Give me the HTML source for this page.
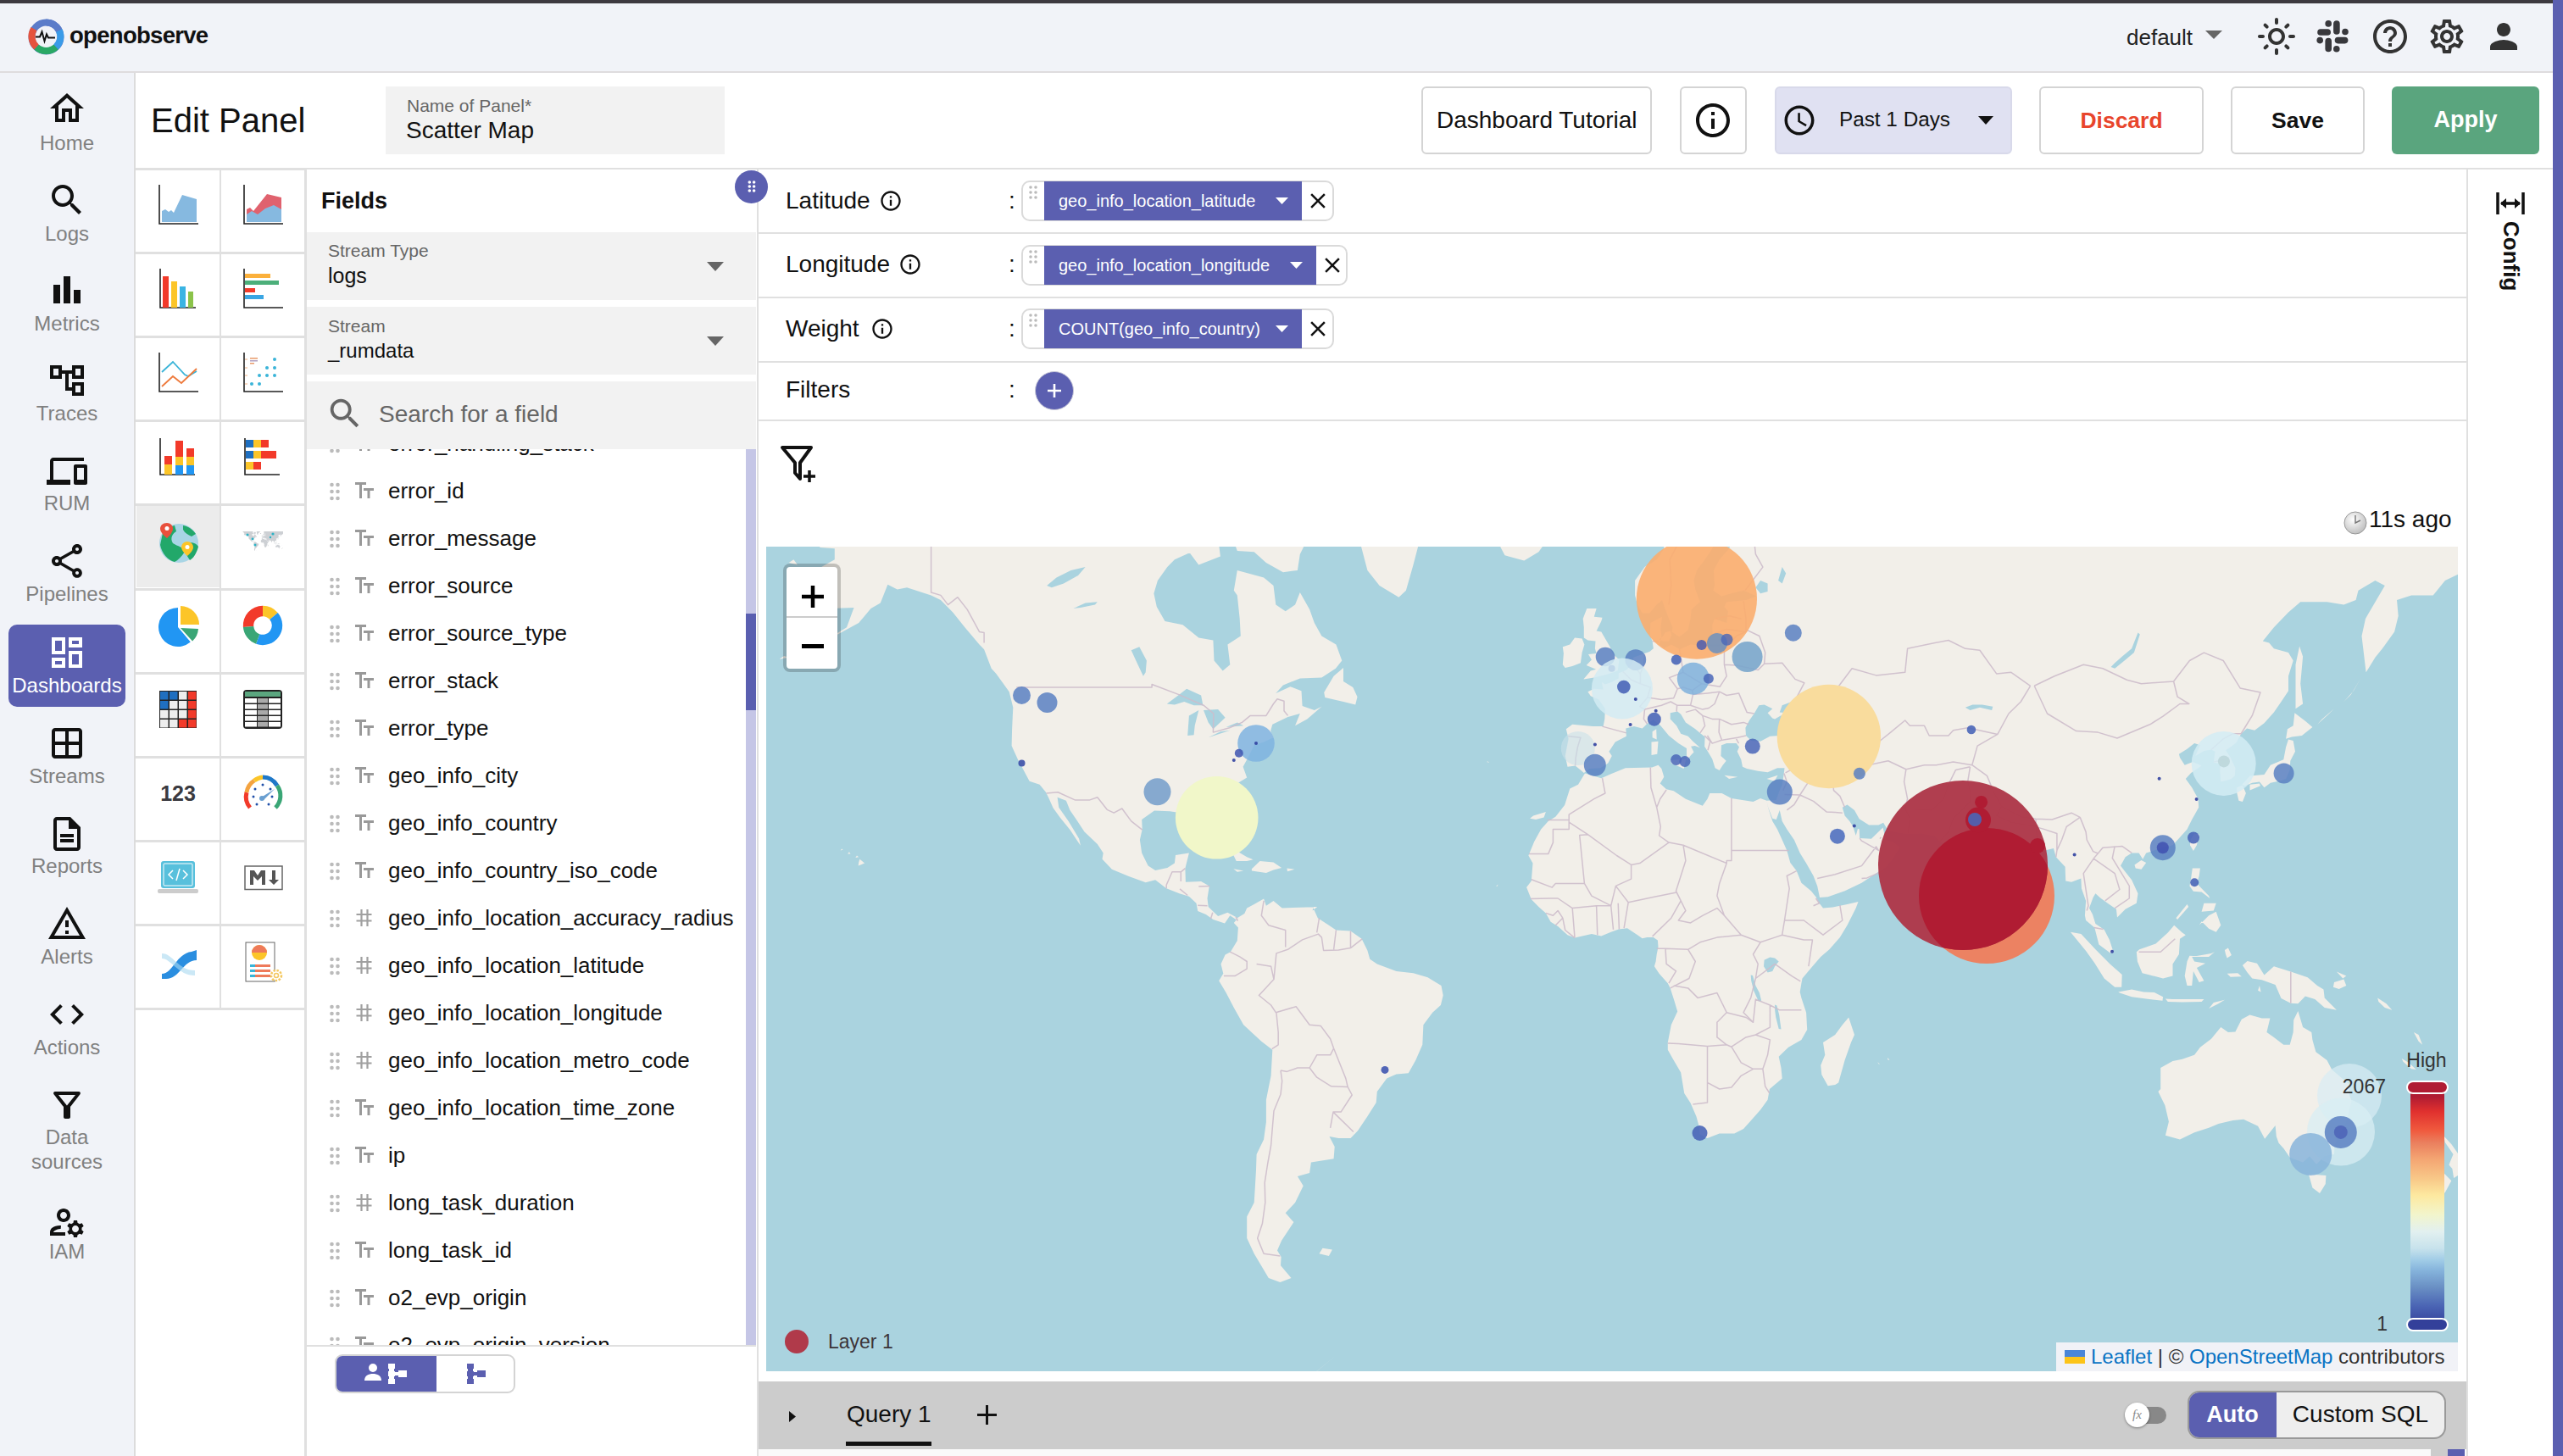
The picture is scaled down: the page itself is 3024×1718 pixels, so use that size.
<!DOCTYPE html>
<html><head><meta charset="utf-8"><style>
html,body{margin:0;padding:0;}
body{width:3024px;height:1718px;overflow:hidden;position:relative;background:#fff;font-family:"Liberation Sans", sans-serif;}
</style></head><body>
<div style="position:absolute;left:0px;top:0px;width:3024px;height:4px;background:#3d3a40"></div><div style="position:absolute;left:0px;top:4px;width:3024px;height:80px;background:#f1f3f8"></div><div style="position:absolute;left:0px;top:84px;width:3024px;height:2px;background:#dedcde"></div><div style="position:absolute;left:0px;top:86px;width:158px;height:1632px;background:#f1f3f8"></div><div style="position:absolute;left:158px;top:86px;width:2px;height:1632px;background:#dcdcdc"></div><div style="position:absolute;left:3012px;top:0px;width:12px;height:1718px;background:#5b5fb0"></div><svg style="position:absolute;left:33px;top:22px;overflow:visible" width="43" height="43" viewBox="0 0 43 43">
<circle cx="21.5" cy="21.5" r="17" fill="none" stroke="#5b7cc9" stroke-width="8" />
<path d="M21.5 4.5 A17 17 0 0 1 36.5 13.5" fill="none" stroke="#5b7cc9" stroke-width="8"/>
<path d="M36.8 14 A17 17 0 0 1 33 33.5" fill="none" stroke="#3a9be8" stroke-width="8"/>
<path d="M33 33.5 A17 17 0 0 1 10 33.5" fill="none" stroke="#2aa865" stroke-width="8"/>
<path d="M10 33.5 A17 17 0 0 1 7 12" fill="none" stroke="#e5533d" stroke-width="8"/>
<path d="M9 21.5 h5 l2.5 -6 l3 11 l2.5 -8 l2 4 h8" fill="none" stroke="#111" stroke-width="2"/>
</svg><div style="position:absolute;left:82px;top:27.7px;font-size:27.5px;line-height:27.5px;color:#111;font-weight:bold;white-space:nowrap;letter-spacing:-0.7px">openobserve</div><div style="position:absolute;left:2509px;top:30.8px;font-size:26px;line-height:26px;color:#222;font-weight:normal;white-space:nowrap;">default</div><svg style="position:absolute;left:2602px;top:36px;overflow:visible" width="20" height="10" viewBox="0 0 20 10"><path d="M0 0 H20 L10 10 Z" fill="#666"/></svg><svg style="position:absolute;left:2662px;top:19px;" width="48" height="48" viewBox="0 0 24 24"><path fill="#333" d="M12 9c1.65 0 3 1.35 3 3s-1.35 3-3 3-3-1.35-3-3 1.35-3 3-3m0-2c-2.76 0-5 2.24-5 5s2.24 5 5 5 5-2.24 5-5-2.24-5-5-5zM2 13h2c.55 0 1-.45 1-1s-.45-1-1-1H2c-.55 0-1 .45-1 1s.45 1 1 1zm18 0h2c.55 0 1-.45 1-1s-.45-1-1-1h-2c-.55 0-1 .45-1 1s.45 1 1 1zM11 2v2c0 .55.45 1 1 1s1-.45 1-1V2c0-.55-.45-1-1-1s-1 .45-1 1zm0 18v2c0 .55.45 1 1 1s1-.45 1-1v-2c0-.55-.45-1-1-1s-1 .45-1 1zM5.99 4.58c-.39-.39-1.03-.39-1.41 0-.39.39-.39 1.03 0 1.41l1.06 1.06c.39.39 1.03.39 1.41 0s.39-1.03 0-1.41L5.99 4.58zm12.37 12.37c-.39-.39-1.03-.39-1.41 0-.39.39-.39 1.03 0 1.41l1.06 1.06c.39.39 1.03.39 1.41 0 .39-.39.39-1.03 0-1.41l-1.06-1.06zm1.06-10.96c.39-.39.39-1.03 0-1.41-.39-.39-1.03-.39-1.41 0l-1.06 1.06c-.39.39-.39 1.03 0 1.41s1.03.39 1.41 0l1.06-1.06zM7.05 18.36c.39-.39.39-1.03 0-1.41-.39-.39-1.03-.39-1.41 0l-1.06 1.06c-.39.39-.39 1.03 0 1.41s1.03.39 1.41 0l1.06-1.06z"/></svg><svg style="position:absolute;left:2730px;top:20px;overflow:visible" width="45" height="45" viewBox="0 0 45 45"><g fill="#38383c">
<circle cx="17.2" cy="7.9" r="3.8"/><rect x="23.1" y="4.3" width="7.6" height="16.4" rx="3.8"/>
<rect x="4.2" y="14.2" width="15.8" height="7.6" rx="3.8"/><circle cx="37" cy="17.5" r="3.8"/>
<rect x="24.7" y="23.8" width="15.7" height="7.6" rx="3.8"/><rect x="13.4" y="24.8" width="7.6" height="16.4" rx="3.8"/>
<circle cx="26.8" cy="37.8" r="3.8"/><circle cx="7.2" cy="27.6" r="3.8"/>
</g></svg><svg style="position:absolute;left:2796px;top:19px;" width="48" height="48" viewBox="0 0 24 24"><path fill="#333" d="M11 18h2v-2h-2v2zm1-16C6.48 2 2 6.48 2 12s4.48 10 10 10 10-4.48 10-10S17.52 2 12 2zm0 18c-4.41 0-8-3.59-8-8s3.59-8 8-8 8 3.59 8 8-3.59 8-8 8zm0-14c-2.21 0-4 1.79-4 4h2c0-1.1.9-2 2-2s2 .9 2 2c0 2-3 1.75-3 5h2c0-2.25 3-2.5 3-5 0-2.21-1.79-4-4-4z"/></svg><svg style="position:absolute;left:2863px;top:19px;" width="48" height="48" viewBox="0 0 24 24"><path fill="#333" d="M19.43 12.98c.04-.32.07-.64.07-.98 0-.34-.03-.66-.07-.98l2.11-1.65c.19-.15.24-.42.12-.64l-2-3.46c-.09-.16-.26-.25-.44-.25-.06 0-.12.01-.17.03l-2.49 1c-.52-.4-1.08-.73-1.69-.98l-.38-2.65C14.46 2.18 14.25 2 14 2h-4c-.25 0-.46.18-.49.42l-.38 2.65c-.61.25-1.17.59-1.69.98l-2.49-1c-.06-.02-.12-.03-.18-.03-.17 0-.34.09-.43.25l-2 3.46c-.13.22-.07.49.12.64l2.11 1.65c-.04.32-.07.65-.07.98 0 .33.03.66.07.98l-2.11 1.65c-.19.15-.24.42-.12.64l2 3.46c.09.16.26.25.44.25.06 0 .12-.01.17-.03l2.49-1c.52.4 1.08.73 1.69.98l.38 2.65c.03.24.24.42.49.42h4c.25 0 .46-.18.49-.42l.38-2.65c.61-.25 1.17-.59 1.69-.98l2.49 1c.06.02.12.03.18.03.17 0 .34-.09.43-.25l2-3.46c.12-.22.07-.49-.12-.64l-2.11-1.65zm-1.98-1.71c.04.31.05.52.05.73 0 .21-.02.43-.05.73l-.14 1.13.89.7 1.08.84-.7 1.21-1.27-.51-1.04-.42-.9.68c-.43.32-.84.56-1.25.73l-1.06.43-.16 1.13-.2 1.35h-1.4l-.19-1.35-.16-1.13-1.06-.43c-.43-.18-.83-.41-1.23-.71l-.91-.7-1.06.43-1.27.51-.7-1.21 1.08-.84.89-.7-.14-1.13c-.03-.31-.05-.54-.05-.74s.02-.43.05-.73l.14-1.13-.89-.7-1.08-.84.7-1.21 1.27.51 1.04.42.9-.68c.43-.32.84-.56 1.25-.73l1.06-.43.16-1.13.2-1.35h1.39l.19 1.35.16 1.13 1.06.43c.43.18.83.41 1.23.71l.91.7 1.06-.43 1.27-.51.7 1.21-1.07.85-.89.7.14 1.13zM12 8c-2.21 0-4 1.79-4 4s1.79 4 4 4 4-1.79 4-4-1.79-4-4-4zm0 6c-1.1 0-2-.9-2-2s.9-2 2-2 2 .9 2 2-.9 2-2 2z"/></svg><svg style="position:absolute;left:2930px;top:19px;" width="48" height="48" viewBox="0 0 24 24"><path fill="#333" d="M12 12c2.21 0 4-1.79 4-4s-1.79-4-4-4-4 1.79-4 4 1.79 4 4 4zm0 2c-2.67 0-8 1.34-8 4v2h16v-2c0-2.66-5.33-4-8-4z"/></svg><div style="position:absolute;left:10px;top:737px;width:138px;height:97px;background:#5b5fb0;border-radius:10px"></div><svg style="position:absolute;left:55px;top:104px;" width="48" height="48" viewBox="0 0 24 24"><path fill="#111" d="M12 5.69l5 4.5V18h-2v-6H9v6H7v-7.81l5-4.5M12 3L2 12h3v8h6v-6h2v6h6v-8h3L12 3z"/></svg><div style="position:absolute;left:-421px;width:1000px;text-align:center;top:157.2px;font-size:24px;line-height:24px;color:#808080;font-weight:normal;white-space:nowrap;">Home</div><svg style="position:absolute;left:55px;top:212px;" width="48" height="48" viewBox="0 0 24 24"><path fill="#111" d="M15.5 14h-.79l-.28-.27C15.41 12.59 16 11.11 16 9.5 16 5.91 13.09 3 9.5 3S3 5.91 3 9.5 5.91 16 9.5 16c1.61 0 3.09-.59 4.23-1.57l.27.28v.79l5 4.99L20.49 19l-4.99-5zm-6 0C7.01 14 5 11.99 5 9.5S7.01 5 9.5 5 14 7.01 14 9.5 11.99 14 9.5 14z"/></svg><div style="position:absolute;left:-421px;width:1000px;text-align:center;top:264.2px;font-size:24px;line-height:24px;color:#808080;font-weight:normal;white-space:nowrap;">Logs</div><svg style="position:absolute;left:55px;top:318px;" width="48" height="48" viewBox="0 0 24 24"><path fill="#111" d="M4 9h4v11H4zm6-5h4v16h-4zm6 8h4v8h-4z"/></svg><div style="position:absolute;left:-421px;width:1000px;text-align:center;top:370.2px;font-size:24px;line-height:24px;color:#808080;font-weight:normal;white-space:nowrap;">Metrics</div><svg style="position:absolute;left:55px;top:425px;" width="48" height="48" viewBox="0 0 24 24"><path fill="#111" d="M22 11V3h-7v3H9V3H2v8h7V8h2v10h4v3h7v-8h-7v3h-2V8h2v3h7zM7 9H4V5h3v4zm10 6h3v4h-3v-4zm0-10h3v4h-3V5z"/></svg><div style="position:absolute;left:-421px;width:1000px;text-align:center;top:476.2px;font-size:24px;line-height:24px;color:#808080;font-weight:normal;white-space:nowrap;">Traces</div><svg style="position:absolute;left:55px;top:532px;" width="48" height="48" viewBox="0 0 24 24"><path fill="#111" d="M4 6h18V4H4c-1.1 0-2 .9-2 2v11H0v3h14v-3H4V6zm19 2h-6c-.55 0-1 .45-1 1v10c0 .55.45 1 1 1h6c.55 0 1-.45 1-1V9c0-.55-.45-1-1-1zm-1 9h-4v-7h4v7z"/></svg><div style="position:absolute;left:-421px;width:1000px;text-align:center;top:582.2px;font-size:24px;line-height:24px;color:#808080;font-weight:normal;white-space:nowrap;">RUM</div><svg style="position:absolute;left:55px;top:638px;" width="48" height="48" viewBox="0 0 24 24"><path fill="#111" d="M18 16.08c-.76 0-1.44.3-1.96.77L8.91 12.7c.05-.23.09-.46.09-.7s-.04-.47-.09-.7l7.05-4.11c.54.5 1.25.81 2.04.81 1.66 0 3-1.34 3-3s-1.34-3-3-3-3 1.34-3 3c0 .24.04.47.09.7L8.04 9.81C7.5 9.31 6.79 9 6 9c-1.66 0-3 1.34-3 3s1.34 3 3 3c.79 0 1.5-.31 2.04-.81l7.12 4.16c-.05.21-.08.43-.08.65 0 1.61 1.31 2.92 2.92 2.92s2.92-1.31 2.92-2.92c0-1.61-1.31-2.92-2.92-2.92zM18 4c.55 0 1 .45 1 1s-.45 1-1 1-1-.45-1-1 .45-1 1-1zM6 13c-.55 0-1-.45-1-1s.45-1 1-1 1 .45 1 1-.45 1-1 1zm12 7.02c-.55 0-1-.45-1-1s.45-1 1-1 1 .45 1 1-.45 1-1 1z"/></svg><div style="position:absolute;left:-421px;width:1000px;text-align:center;top:689.2px;font-size:24px;line-height:24px;color:#808080;font-weight:normal;white-space:nowrap;">Pipelines</div><svg style="position:absolute;left:55px;top:746px;" width="48" height="48" viewBox="0 0 24 24"><path fill="#fff" d="M19 5v2h-4V5h4M9 5v6H5V5h4m10 8v6h-4v-6h4M9 17v2H5v-2h4M21 3h-8v6h8V3zM11 3H3v10h8V3zm10 8h-8v10h8V11zm-10 4H3v6h8v-6z"/></svg><div style="position:absolute;left:-421px;width:1000px;text-align:center;top:797.2px;font-size:24px;line-height:24px;color:#fff;font-weight:normal;white-space:nowrap;">Dashboards</div><svg style="position:absolute;left:55px;top:853px;" width="48" height="48" viewBox="0 0 24 24"><path fill="#111" d="M19 3H5c-1.1 0-2 .9-2 2v14c0 1.1.9 2 2 2h14c1.1 0 2-.9 2-2V5c0-1.1-.9-2-2-2zm0 2v6h-6V5h6zm-8 0v6H5V5h6zm-6 14v-6h6v6H5zm8 0v-6h6v6h-6z"/></svg><div style="position:absolute;left:-421px;width:1000px;text-align:center;top:904.2px;font-size:24px;line-height:24px;color:#808080;font-weight:normal;white-space:nowrap;">Streams</div><svg style="position:absolute;left:55px;top:960px;" width="48" height="48" viewBox="0 0 24 24"><path fill="#111" d="M14 2H6c-1.1 0-1.99.9-1.99 2L4 20c0 1.1.89 2 1.99 2H18c1.1 0 2-.9 2-2V8l-6-6zm4 18H6V4h7v5h5v11zM8 15h8v2H8zm0-3h8v2H8z"/></svg><div style="position:absolute;left:-421px;width:1000px;text-align:center;top:1010.2px;font-size:24px;line-height:24px;color:#808080;font-weight:normal;white-space:nowrap;">Reports</div><svg style="position:absolute;left:55px;top:1066px;" width="48" height="48" viewBox="0 0 24 24"><path fill="#111" d="M12 5.99L19.53 19H4.47L12 5.99M12 2L1 21h22L12 2zm1 14h-2v2h2v-2zm0-6h-2v4h2v-4z"/></svg><div style="position:absolute;left:-421px;width:1000px;text-align:center;top:1117.2px;font-size:24px;line-height:24px;color:#808080;font-weight:normal;white-space:nowrap;">Alerts</div><svg style="position:absolute;left:55px;top:1173px;" width="48" height="48" viewBox="0 0 24 24"><path fill="#111" d="M9.4 16.6L4.8 12l4.6-4.6L8 6l-6 6 6 6 1.4-1.4zm5.2 0l4.6-4.6-4.6-4.6L16 6l6 6-6 6-1.4-1.4z"/></svg><div style="position:absolute;left:-421px;width:1000px;text-align:center;top:1224.2px;font-size:24px;line-height:24px;color:#808080;font-weight:normal;white-space:nowrap;">Actions</div><svg style="position:absolute;left:55px;top:1280px;" width="48" height="48" viewBox="0 0 24 24"><path fill="#111" d="M7 6h10l-5.01 6.3L7 6zm-2.75-.39C6.27 8.2 10 13 10 13v6c0 .55.45 1 1 1h2c.55 0 1-.45 1-1v-6s3.72-4.8 5.74-7.39c.51-.66.04-1.61-.79-1.61H5.04c-.83 0-1.3.95-.79 1.61z"/></svg><div style="position:absolute;left:-421px;width:1000px;text-align:center;top:1329.7px;font-size:24px;line-height:24px;color:#808080;font-weight:normal;white-space:nowrap;">Data</div><div style="position:absolute;left:-421px;width:1000px;text-align:center;top:1358.7px;font-size:24px;line-height:24px;color:#808080;font-weight:normal;white-space:nowrap;">sources</div><svg style="position:absolute;left:55px;top:1418px;" width="48" height="48" viewBox="0 0 24 24"><path fill="#111" d="M10 12c2.21 0 4-1.79 4-4s-1.79-4-4-4-4 1.79-4 4 1.79 4 4 4zm0-6c1.1 0 2 .9 2 2s-.9 2-2 2-2-.9-2-2 .9-2 2-2zM4 18c0-.24.8-1.6 4.3-1.95l.2-1.98C4.1 13.9 2 15.9 2 18v2h9v-2H4zm16.75-2c0-.22-.03-.42-.06-.63l1.14-1.01-1-1.73-1.45.49c-.32-.27-.68-.48-1.08-.63L18 11h-2l-.3 1.49c-.4.15-.76.36-1.08.63l-1.45-.49-1 1.73 1.14 1.01c-.03.21-.06.41-.06.63s.03.42.06.63l-1.14 1.01 1 1.73 1.45-.49c.32.27.68.48 1.08.63L16 21h2l.3-1.49c.4-.15.76-.36 1.08-.63l1.45.49 1-1.73-1.14-1.01c.03-.21.06-.41.06-.63zM17 18c-1.1 0-2-.9-2-2s.9-2 2-2 2 .9 2 2-.9 2-2 2z"/></svg><div style="position:absolute;left:-421px;width:1000px;text-align:center;top:1464.7px;font-size:24px;line-height:24px;color:#808080;font-weight:normal;white-space:nowrap;">IAM</div><div style="position:absolute;left:178px;top:121.6px;font-size:40px;line-height:40px;color:#111;font-weight:normal;white-space:nowrap;">Edit Panel</div><div style="position:absolute;left:455px;top:102px;width:400px;height:80px;background:#f2f2f2"></div><div style="position:absolute;left:480px;top:113.6px;font-size:21px;line-height:21px;color:#666;font-weight:normal;white-space:nowrap;">Name of Panel*</div><div style="position:absolute;left:479px;top:139.9px;font-size:28px;line-height:28px;color:#111;font-weight:normal;white-space:nowrap;">Scatter Map</div><div style="position:absolute;left:1677px;top:102px;width:272px;height:80px;box-sizing:border-box;border:2px solid #d4d4d4;border-radius:6px;"></div><div style="position:absolute;left:1695px;top:127.5px;font-size:28px;line-height:28px;color:#111;font-weight:normal;white-space:nowrap;">Dashboard Tutorial</div><div style="position:absolute;left:1982px;top:102px;width:79px;height:80px;box-sizing:border-box;border:2px solid #d4d4d4;border-radius:6px;"></div><svg style="position:absolute;left:1997px;top:118px;" width="48" height="48" viewBox="0 0 24 24"><path fill="#111" d="M11 7h2v2h-2zm0 4h2v6h-2zm1-9C6.48 2 2 6.48 2 12s4.48 10 10 10 10-4.48 10-10S17.52 2 12 2zm0 18c-4.41 0-8-3.59-8-8s3.59-8 8-8 8 3.59 8 8-3.59 8-8 8z"/></svg><div style="position:absolute;left:2094px;top:102px;width:280px;height:80px;box-sizing:border-box;border:2px solid #d4d4d4;border-radius:6px;background:#e0e1f2;border-color:#d8d9ea"></div><svg style="position:absolute;left:2102px;top:121px;" width="42" height="42" viewBox="0 0 24 24"><path fill="#111" d="M11.99 2C6.47 2 2 6.48 2 12s4.47 10 9.99 10C17.52 22 22 17.52 22 12S17.52 2 11.99 2zM12 20c-4.42 0-8-3.58-8-8s3.58-8 8-8 8 3.58 8 8-3.58 8-8 8zm.5-13H11v6l5.25 3.15.75-1.23-4.5-2.67z"/></svg><div style="position:absolute;left:2170px;top:129.2px;font-size:24.3px;line-height:24.3px;color:#111;font-weight:normal;white-space:nowrap;">Past 1 Days</div><svg style="position:absolute;left:2334px;top:137px;overflow:visible" width="18" height="10" viewBox="0 0 18 10"><path d="M0 0 H18 L9 10 Z" fill="#111"/></svg><div style="position:absolute;left:2406px;top:102px;width:194px;height:80px;box-sizing:border-box;border:2px solid #d4d4d4;border-radius:6px;"></div><div style="position:absolute;left:2003px;width:1000px;text-align:center;top:128.6px;font-size:26.5px;line-height:26.5px;color:#e8452c;font-weight:bold;white-space:nowrap;">Discard</div><div style="position:absolute;left:2632px;top:102px;width:158px;height:80px;box-sizing:border-box;border:2px solid #d4d4d4;border-radius:6px;"></div><div style="position:absolute;left:2211px;width:1000px;text-align:center;top:128.6px;font-size:26.5px;line-height:26.5px;color:#111;font-weight:bold;white-space:nowrap;">Save</div><div style="position:absolute;left:2822px;top:102px;width:174px;height:80px;background:#5aa57e;border-radius:6px"></div><div style="position:absolute;left:2409px;width:1000px;text-align:center;top:128.1px;font-size:27px;line-height:27px;color:#fff;font-weight:bold;white-space:nowrap;">Apply</div><div style="position:absolute;left:160px;top:198px;width:2852px;height:2px;background:#e0e0e0"></div><div style="position:absolute;left:160px;top:200px;width:200px;height:990px;background:#fff"></div><div style="position:absolute;left:160px;top:198px;width:200px;height:3px;background:#e0e0e0"></div><div style="position:absolute;left:160px;top:297px;width:200px;height:3px;background:#e0e0e0"></div><div style="position:absolute;left:160px;top:396px;width:200px;height:3px;background:#e0e0e0"></div><div style="position:absolute;left:160px;top:495px;width:200px;height:3px;background:#e0e0e0"></div><div style="position:absolute;left:160px;top:594px;width:200px;height:3px;background:#e0e0e0"></div><div style="position:absolute;left:160px;top:694px;width:200px;height:3px;background:#e0e0e0"></div><div style="position:absolute;left:160px;top:793px;width:200px;height:3px;background:#e0e0e0"></div><div style="position:absolute;left:160px;top:892px;width:200px;height:3px;background:#e0e0e0"></div><div style="position:absolute;left:160px;top:991px;width:200px;height:3px;background:#e0e0e0"></div><div style="position:absolute;left:160px;top:1090px;width:200px;height:3px;background:#e0e0e0"></div><div style="position:absolute;left:160px;top:1189px;width:200px;height:3px;background:#e0e0e0"></div><div style="position:absolute;left:259px;top:200px;width:2px;height:990px;background:#e0e0e0"></div><div style="position:absolute;left:359px;top:200px;width:3px;height:1518px;background:#e0e0e0"></div><div style="position:absolute;left:161px;top:597px;width:98px;height:96px;background:#ececec"></div><svg style="position:absolute;left:186px;top:218px;overflow:visible" width="48" height="48" viewBox="0 0 48 48"><path d="M2 0 V46 H48" fill="none" stroke="#222" stroke-width="1.6"/><path d="M5 44 V31 L9 29 L13 32 L16 30 L19 33 L29 12 L46 17 V44 Z" fill="#86b9e0"/></svg><svg style="position:absolute;left:286px;top:218px;overflow:visible" width="48" height="48" viewBox="0 0 48 48"><path d="M2 0 V46 H48" fill="none" stroke="#222" stroke-width="1.6"/><path d="M5 44 V29 L9 27 L13 31 L29 11 L46 15 V44 Z" fill="#e0626e"/><path d="M5 44 V35 L11 31 L18 35 L27 28 L37 24 L46 29 V44 Z" fill="#86b9e0"/></svg><svg style="position:absolute;left:186px;top:317px;overflow:visible" width="48" height="48" viewBox="0 0 48 48"><path d="M3 0 V46 H45" fill="none" stroke="#222" stroke-width="1.6"/><rect x="6" y="9" width="7" height="37" fill="#f23a2a"/><rect x="16" y="15" width="7" height="31" fill="#fcc528"/><rect x="26" y="21" width="7" height="25" fill="#3ab4e3"/><rect x="36" y="27" width="6" height="19" fill="#8bc34a"/></svg><svg style="position:absolute;left:286px;top:317px;overflow:visible" width="48" height="48" viewBox="0 0 48 48"><path d="M2 0 V46 H48" fill="none" stroke="#222" stroke-width="1.6"/><rect x="3" y="6" width="30" height="5" fill="#fbb03b"/><rect x="3" y="14" width="40" height="5" fill="#4caf7a"/><rect x="3" y="23" width="12" height="5" fill="#f23a2a"/><rect x="3" y="31" width="22" height="5" fill="#3aa6e3"/></svg><svg style="position:absolute;left:186px;top:416px;overflow:visible" width="48" height="48" viewBox="0 0 48 48"><path d="M2 0 V46 H48" fill="none" stroke="#222" stroke-width="1.6"/><path d="M5 23 L18 11 L32 26 L36 28 L46 22" fill="none" stroke="#3ab4d8" stroke-width="1.8"/><path d="M5 40 L18 28 L28 36 L46 19" fill="none" stroke="#ee7a3c" stroke-width="1.8"/></svg><svg style="position:absolute;left:286px;top:416px;overflow:visible" width="48" height="48" viewBox="0 0 48 48"><path d="M2 0 V46 H48" fill="none" stroke="#222" stroke-width="1.6"/><g fill="#e89a6a"><rect x="9" y="6" width="9" height="1.5"/><rect x="9" y="9" width="9" height="1.5" fill="#b0a0c0"/><rect x="9" y="12" width="5" height="1.5"/></g><g fill="#3ab4d8"><circle cx="38" cy="8" r="2"/><circle cx="29" cy="18" r="2"/><circle cx="38" cy="18" r="2"/><circle cx="20" cy="27" r="2"/><circle cx="29" cy="27" r="2"/><circle cx="38" cy="27" r="2"/><circle cx="11" cy="37" r="2"/><circle cx="20" cy="37" r="2"/></g><g stroke="#f0b080" stroke-width="1"><path d="M3 8 H6 M3 18 H6 M3 27 H6 M3 37 H6"/></g></svg><svg style="position:absolute;left:186px;top:515px;overflow:visible" width="48" height="48" viewBox="0 0 48 48"><path d="M3 2 V45 H44" fill="none" stroke="#222" stroke-width="1.6"/><rect x="8" y="23" width="9" height="10" fill="#f23a2a"/><rect x="8" y="33" width="9" height="12" fill="#fcc528"/><rect x="21" y="5" width="9" height="19" fill="#f23a2a"/><rect x="21" y="24" width="9" height="10" fill="#fcc528"/><rect x="21" y="34" width="9" height="11" fill="#2196f3"/><rect x="34" y="14" width="9" height="10" fill="#f23a2a"/><rect x="34" y="24" width="9" height="10" fill="#fcc528"/><rect x="34" y="34" width="9" height="11" fill="#2196f3"/></svg><svg style="position:absolute;left:286px;top:515px;overflow:visible" width="48" height="48" viewBox="0 0 48 48"><path d="M3 2 V45 H44" fill="none" stroke="#222" stroke-width="1.6"/><rect x="4" y="4" width="9" height="9" fill="#1f6fc0"/><rect x="13" y="4" width="9" height="9" fill="#fcc528"/><rect x="22" y="4" width="9" height="9" fill="#f23a2a"/><rect x="4" y="17" width="9" height="9" fill="#1f6fc0"/><rect x="13" y="17" width="9" height="9" fill="#fcc528"/><rect x="22" y="17" width="18" height="9" fill="#f23a2a"/><rect x="4" y="30" width="9" height="9" fill="#fcc528"/><rect x="13" y="30" width="9" height="9" fill="#f23a2a"/></svg><svg style="position:absolute;left:186px;top:615px;overflow:visible" width="48" height="48" viewBox="0 0 48 48"><circle cx="25" cy="26" r="23" fill="#a8d5e5"/><path d="M6 14 C10 8 16 6 20 5 L22 12 C18 14 14 20 18 26 C24 30 30 30 32 36 C28 42 24 46 20 48 C12 46 5 38 3 28 Z M30 5 C36 6 42 10 45 15 L40 18 C36 16 32 14 30 10 Z M34 26 C40 24 46 26 48 30 C46 38 42 44 38 46 C34 40 30 34 34 26 Z" fill="#22a86a"/><path d="M11 2 C6 2 3 5 3 9 C3 14 11 20 11 20 C11 20 18 14 18 9 C18 5 15 2 11 2 Z" fill="#e8503c"/><circle cx="11" cy="8.5" r="2.5" fill="#fff"/><path d="M35 24 C31 24 28 27 28 31 C28 35 35 41 35 41 C35 41 42 35 42 31 C42 27 39 24 35 24 Z" fill="#fcc528"/><circle cx="35" cy="30.5" r="2.5" fill="#fff"/></svg><svg style="position:absolute;left:286px;top:617px;overflow:visible" width="48" height="34" viewBox="0 0 48 34"><path d="M0.00 9.92 L1.60 11.31 L1.80 12.17 L2.13 12.62 L2.53 12.65 L2.53 12.95 L2.00 13.25 L1.93 13.80 L2.40 13.99 L2.40 14.30 L3.07 14.28 L2.87 14.83 L2.40 15.11 L2.07 15.27 L2.53 15.07 L3.20 14.71 L3.53 14.30 L3.80 14.15 L4.00 13.64 L4.27 13.78 L4.53 13.72 L5.20 13.94 L5.47 14.07 L5.80 14.41 L6.13 14.83 L6.53 15.30 L6.67 15.43 L6.87 15.96 L7.00 16.11 L7.36 16.61 L7.47 17.04 L7.44 17.64 L7.43 18.10 L7.60 18.48 L7.67 18.60 L7.75 18.75 L7.92 19.08 L8.20 19.17 L8.37 19.38 L8.47 19.57 L8.57 19.82 L8.77 20.09 L9.04 20.42 L9.33 20.86 L9.29 20.67 L9.00 20.18 L8.73 19.80 L8.69 19.52 L8.93 19.62 L9.04 19.88 L9.27 20.21 L9.44 20.48 L9.80 20.82 L9.96 21.06 L9.93 21.23 L10.20 21.52 L10.67 21.71 L11.13 21.88 L11.40 21.81 L11.71 22.05 L12.07 22.18 L12.33 22.27 L12.53 22.46 L12.57 22.67 L12.80 22.77 L13.00 22.90 L13.32 23.01 L13.47 22.80 L13.67 22.93 L13.68 22.86 L13.40 22.71 L13.13 22.81 L12.87 22.55 L12.84 22.32 L12.89 21.98 L12.67 21.85 L12.24 21.87 L12.23 21.49 L12.33 21.06 L11.96 21.12 L11.93 21.35 L11.73 21.48 L11.40 21.55 L11.20 21.42 L11.03 21.06 L10.97 20.70 L11.04 20.41 L11.03 20.14 L11.37 19.90 L11.80 19.91 L12.11 19.96 L12.07 19.77 L12.33 19.76 L12.67 19.85 L12.80 19.79 L12.97 20.08 L13.11 20.41 L13.21 20.54 L13.32 20.33 L13.25 20.03 L13.15 19.73 L13.19 19.49 L13.43 19.30 L13.61 19.17 L13.93 18.98 L13.83 18.68 L13.99 18.38 L14.13 18.08 L14.40 18.00 L14.67 17.87 L14.59 17.69 L14.64 17.51 L15.07 17.30 L15.40 17.21 L15.27 17.55 L15.60 17.36 L16.00 17.02 L15.80 17.11 L15.47 17.00 L15.44 16.59 L15.13 16.46 L14.73 16.65 L14.93 16.42 L15.40 16.24 L16.00 16.22 L16.39 15.96 L16.56 15.75 L16.40 15.30 L16.00 15.07 L15.80 14.71 L15.67 14.33 L15.40 13.86 L15.27 14.20 L15.00 14.38 L14.73 14.20 L14.67 13.67 L14.40 13.45 L13.67 13.25 L13.57 13.80 L13.67 13.94 L13.73 14.58 L13.76 15.07 L13.40 15.30 L13.47 15.86 L13.27 16.03 L13.03 15.75 L13.00 15.18 L12.60 15.11 L12.16 14.75 L11.67 14.66 L11.44 14.25 L11.36 13.89 L11.47 13.53 L11.73 13.16 L11.93 12.95 L12.40 12.74 L12.40 9.92ZM13.60 10.74 L15.73 10.74 L15.80 12.00 L15.40 12.80 L15.33 13.25 L14.93 13.30 L14.47 13.04 L14.13 12.74 L13.67 12.71 L13.53 12.33ZM12.33 12.74 L12.60 13.10 L13.20 12.86 L13.13 12.33 L12.40 12.17ZM16.67 9.92 L17.07 12.49 L17.27 13.25 L17.60 13.67 L18.13 13.99 L18.33 13.80 L18.53 13.10 L18.73 12.33 L21.33 9.92ZM20.80 12.33 L21.07 12.83 L21.60 12.98 L22.00 12.74 L22.20 12.46 L22.07 12.07 L21.60 12.10 L21.00 12.04 L20.73 12.30ZM12.67 21.01 L12.80 20.89 L13.07 20.82 L13.33 20.83 L13.67 21.02 L13.93 21.18 L14.11 21.25 L13.93 21.29 L13.64 21.29 L13.53 21.06 L13.20 21.01 L13.00 20.98 L12.68 21.02ZM14.07 21.50 L14.29 21.29 L14.67 21.32 L14.89 21.48 L14.67 21.53 L14.47 21.62 L14.07 21.56ZM13.56 21.50 L13.84 21.56 L13.67 21.59ZM15.04 21.49 L15.25 21.52 L15.05 21.57ZM16.09 16.76 L16.60 16.88 L16.93 16.96 L16.99 16.75 L16.87 16.48 L16.60 16.32 L16.60 15.94 L16.33 16.17 L16.07 16.63ZM13.69 22.85 L13.87 22.74 L13.93 22.59 L14.13 22.48 L14.40 22.33 L14.47 22.52 L14.67 22.39 L14.91 22.59 L15.20 22.58 L15.60 22.56 L15.76 22.56 L15.89 22.86 L16.20 23.06 L16.40 23.20 L16.80 23.23 L17.11 23.44 L17.27 23.76 L17.33 24.00 L17.53 24.13 L18.07 24.33 L18.53 24.39 L18.93 24.51 L19.31 24.73 L19.36 25.00 L19.29 25.27 L19.07 25.48 L18.81 25.82 L18.79 26.37 L18.60 26.79 L18.40 27.15 L18.07 27.18 L17.80 27.30 L17.53 27.67 L17.51 27.97 L17.27 28.35 L17.00 28.75 L16.80 28.95 L16.47 28.95 L16.21 28.91 L16.36 29.18 L16.33 29.52 L15.71 29.62 L15.67 29.92 L15.33 30.00 L15.49 30.27 L15.27 30.73 L15.00 31.02 L15.23 31.27 L14.89 31.78 L14.77 32.06 L14.88 32.23 L14.87 32.48 L15.16 32.82 L14.85 32.93 L14.53 32.82 L14.13 32.14 L13.93 31.72 L13.93 31.12 L14.13 30.73 L14.16 30.27 L14.19 29.83 L14.20 29.40 L14.40 28.99 L14.47 28.51 L14.47 27.89 L14.60 27.23 L14.64 26.51 L14.33 26.27 L13.84 25.82 L13.57 25.34 L13.36 24.94 L13.16 24.60 L13.28 24.40 L13.21 24.13 L13.33 23.88 L13.48 23.80 L13.67 23.49 L13.69 23.13 L13.57 23.00ZM25.33 9.92 L25.47 12.65 L25.27 12.95 L24.93 13.16 L24.67 13.53 L24.67 13.94 L24.73 14.20 L24.87 14.43 L25.07 14.43 L25.27 14.20 L25.41 14.07 L25.47 14.23 L25.60 14.58 L25.71 14.83 L25.68 14.95 L25.89 15.09 L26.13 14.90 L26.20 14.58 L26.23 14.33 L26.47 14.12 L26.33 13.78 L26.29 13.53 L26.37 13.25 L26.60 12.95 L26.80 12.65 L26.93 12.33 L27.33 12.49 L27.27 12.65 L27.00 12.95 L26.84 13.25 L26.87 13.67 L26.83 13.80 L27.05 13.97 L27.33 13.89 L27.67 13.80 L28.03 13.97 L27.73 14.07 L27.20 14.12 L27.13 14.25 L27.24 14.38 L27.20 14.71 L26.87 14.58 L26.80 14.75 L26.81 15.07 L26.67 15.23 L26.48 15.32 L26.20 15.30 L25.91 15.43 L25.67 15.30 L25.47 15.41 L25.33 15.30 L25.40 15.07 L25.37 14.88 L25.41 14.53 L25.09 14.71 L25.08 15.04 L25.15 15.21 L25.17 15.41 L25.07 15.50 L24.93 15.55 L24.63 15.66 L24.59 15.81 L24.52 15.90 L24.45 15.98 L24.33 16.05 L24.21 16.09 L24.21 16.24 L24.01 16.34 L23.84 16.40 L23.75 16.34 L23.79 16.55 L23.53 16.52 L23.36 16.61 L23.44 16.73 L23.67 16.82 L23.84 17.08 L23.83 17.36 L23.79 17.56 L23.49 17.56 L22.93 17.51 L22.76 17.64 L22.83 17.91 L22.73 18.38 L22.80 18.68 L23.01 18.65 L23.17 18.78 L23.25 18.85 L23.40 18.73 L23.71 18.72 L23.92 18.58 L24.03 18.38 L23.95 18.26 L24.12 18.00 L24.43 17.84 L24.41 17.62 L24.64 17.56 L24.87 17.62 L25.00 17.49 L25.17 17.38 L25.37 17.55 L25.60 17.82 L25.87 18.03 L26.09 18.17 L26.09 18.51 L26.21 18.36 L26.29 18.28 L26.21 18.12 L26.32 18.10 L26.47 18.15 L26.27 17.98 L26.13 17.84 L25.93 17.76 L25.81 17.55 L25.64 17.36 L25.64 17.19 L25.84 17.15 L25.93 17.23 L26.07 17.45 L26.33 17.64 L26.47 17.75 L26.60 17.85 L26.59 18.12 L26.68 18.26 L26.80 18.46 L26.88 18.72 L27.00 18.78 L27.09 18.63 L27.19 18.51 L27.04 18.38 L27.05 18.08 L27.20 18.03 L27.47 18.03 L27.55 18.14 L27.49 18.26 L27.60 18.48 L27.64 18.68 L27.76 18.73 L28.07 18.80 L28.33 18.83 L28.60 18.72 L28.80 18.72 L28.77 18.93 L28.73 19.17 L28.65 19.37 L28.57 19.60 L28.31 19.62 L28.35 19.80 L28.47 20.11 L28.57 20.14 L28.67 19.88 L28.73 20.18 L28.87 20.41 L29.07 20.70 L29.23 21.06 L29.40 21.35 L29.60 21.70 L29.71 21.98 L29.77 22.29 L30.00 22.28 L30.47 22.11 L30.93 21.89 L31.33 21.63 L31.60 21.45 L31.80 21.21 L31.97 20.92 L31.80 20.76 L31.60 20.70 L31.52 20.36 L31.40 20.48 L31.20 20.67 L30.88 20.66 L30.87 20.41 L30.83 20.39 L30.77 20.58 L30.69 20.33 L30.60 20.18 L30.47 20.03 L30.40 19.80 L30.53 19.73 L30.73 19.88 L30.87 20.12 L31.13 20.29 L31.40 20.29 L31.53 20.23 L31.67 20.45 L32.20 20.54 L32.60 20.53 L32.93 20.58 L33.13 20.77 L33.33 20.88 L33.20 20.96 L33.33 21.14 L33.67 21.11 L33.71 21.42 L33.80 21.84 L33.97 22.28 L34.17 22.73 L34.33 22.92 L34.43 22.81 L34.65 22.62 L34.71 22.24 L34.69 21.91 L34.97 21.76 L35.27 21.49 L35.53 21.28 L35.60 21.06 L35.80 21.02 L36.00 20.99 L36.24 20.93 L36.31 21.18 L36.56 21.45 L36.57 21.84 L36.73 21.87 L37.00 21.77 L37.01 22.05 L37.13 22.39 L37.11 22.80 L37.13 22.93 L37.37 23.13 L37.49 23.60 L37.80 23.83 L37.89 23.80 L37.79 23.47 L37.64 23.19 L37.40 23.02 L37.32 22.77 L37.23 22.59 L37.33 22.29 L37.40 22.18 L37.53 22.31 L37.73 22.46 L37.97 22.62 L38.00 22.85 L38.23 22.62 L38.53 22.46 L38.57 22.18 L38.40 21.81 L38.20 21.56 L38.09 21.42 L38.23 21.18 L38.40 21.06 L38.60 21.06 L38.71 21.23 L38.80 21.06 L39.13 20.96 L39.53 20.85 L39.73 20.63 L39.93 20.41 L40.07 20.14 L40.25 19.80 L40.24 19.57 L40.07 19.25 L39.89 19.01 L40.04 18.85 L40.33 18.65 L40.09 18.55 L39.87 18.63 L39.73 18.43 L39.71 18.33 L39.93 18.19 L40.13 18.03 L40.29 18.08 L40.16 18.38 L40.40 18.24 L40.60 18.21 L40.71 18.26 L40.67 18.57 L40.87 18.60 L40.84 18.77 L40.87 19.09 L41.13 19.03 L41.25 18.93 L41.27 18.72 L41.13 18.43 L41.00 18.22 L41.13 18.14 L41.29 18.01 L41.43 17.76 L41.59 17.62 L41.80 17.67 L42.07 17.47 L42.33 17.17 L42.53 16.88 L42.73 16.59 L42.73 16.17 L42.87 15.75 L42.73 15.52 L42.33 15.41 L42.20 15.25 L42.03 15.21 L42.33 14.83 L42.73 14.41 L43.07 14.12 L43.80 14.12 L44.27 14.20 L44.60 14.07 L44.67 13.80 L45.13 13.53 L45.40 13.67 L44.87 14.58 L44.76 15.07 L44.88 16.07 L45.13 15.66 L45.33 15.41 L45.67 14.95 L45.77 14.51 L45.73 14.07 L46.13 13.94 L46.73 13.94 L47.07 13.53 L47.67 13.25 L47.87 13.10 L48.00 12.49 L48.00 9.92ZM28.31 19.62 L28.13 19.56 L27.93 19.65 L27.33 19.56 L27.07 19.41 L26.73 19.41 L26.67 19.57 L26.53 19.76 L26.07 19.57 L25.73 19.35 L25.53 19.30 L25.36 19.14 L25.47 18.96 L25.40 18.73 L25.31 18.63 L25.13 18.70 L24.40 18.72 L24.00 18.88 L23.73 19.00 L23.28 18.87 L23.09 19.17 L22.87 19.29 L22.72 19.74 L22.47 20.06 L22.27 20.18 L22.07 20.41 L21.88 20.75 L21.72 21.14 L21.84 21.35 L21.80 21.84 L21.67 22.02 L21.76 22.25 L21.80 22.35 L22.00 22.55 L22.20 22.73 L22.33 22.97 L22.53 23.09 L22.80 23.33 L23.00 23.41 L23.47 23.31 L23.73 23.36 L24.00 23.25 L24.21 23.17 L24.45 23.14 L24.73 23.33 L24.87 23.43 L25.00 23.40 L25.17 23.40 L25.29 23.48 L25.31 23.67 L25.27 23.87 L25.24 24.07 L25.20 24.20 L25.33 24.40 L25.57 24.67 L25.64 24.80 L25.76 25.18 L25.84 25.45 L25.67 25.82 L25.57 26.30 L25.57 26.51 L25.73 26.79 L25.93 27.14 L26.03 27.71 L26.20 27.98 L26.36 28.35 L26.44 28.63 L26.45 28.84 L26.60 28.92 L26.67 28.95 L27.00 28.83 L27.41 28.83 L27.67 28.70 L27.93 28.40 L28.13 28.17 L28.33 27.89 L28.39 27.59 L28.73 27.30 L28.71 27.01 L28.64 26.69 L28.91 26.44 L29.27 26.23 L29.43 25.95 L29.40 25.48 L29.27 25.07 L29.23 24.91 L29.27 24.67 L29.29 24.53 L29.55 24.23 L29.80 23.93 L30.04 23.73 L30.33 23.40 L30.53 23.06 L30.77 22.59 L30.84 22.42 L30.53 22.48 L30.13 22.56 L29.87 22.59 L29.76 22.46 L29.67 22.28 L29.53 22.11 L29.27 21.89 L29.13 21.56 L28.96 21.33 L28.87 20.99 L28.73 20.70 L28.60 20.41 L28.47 20.18 L28.35 19.82ZM30.57 25.61 L30.73 26.09 L30.64 26.30 L30.47 26.79 L30.29 27.42 L30.20 27.47 L30.00 27.50 L29.83 27.20 L29.80 26.94 L29.92 26.65 L29.87 26.30 L30.20 26.09 L30.40 25.82ZM34.65 22.70 L34.83 22.86 L34.92 23.06 L34.83 23.17 L34.68 23.20 L34.64 23.00ZM23.24 16.26 L23.53 16.22 L23.87 16.13 L24.19 16.03 L24.23 15.72 L24.04 15.55 L23.97 15.37 L23.79 15.04 L23.73 14.95 L23.60 14.92 L23.73 14.66 L23.76 14.56 L23.53 14.53 L23.60 14.30 L23.33 14.30 L23.23 14.58 L23.25 14.83 L23.25 15.11 L23.36 15.18 L23.57 15.21 L23.56 15.41 L23.60 15.55 L23.37 15.57 L23.47 15.72 L23.32 15.88 L23.59 15.98 L23.44 16.03ZM23.20 15.14 L23.00 15.11 L22.87 15.30 L22.67 15.37 L22.69 15.55 L22.67 15.86 L22.73 15.94 L22.93 15.90 L23.16 15.81 L23.20 15.52 L23.27 15.30ZM25.12 18.00 L25.31 17.98 L25.28 18.33 L25.12 18.36ZM25.25 17.64 L25.27 17.93 L25.15 17.87 L25.15 17.71ZM25.65 18.50 L26.08 18.46 L26.01 18.73 L25.67 18.58ZM27.13 18.91 L27.51 18.96 L27.27 19.01ZM28.31 19.01 L28.61 18.91 L28.52 19.08ZM25.33 15.16 L25.44 15.07 L25.49 14.97 L25.64 14.92 L25.68 15.04 L25.60 15.21 L25.44 15.21ZM41.45 19.17 L41.67 18.93 L42.07 18.90 L42.24 18.63 L42.60 18.48 L42.67 18.14 L42.73 17.93 L42.87 17.96 L42.92 18.26 L42.79 18.51 L42.77 18.77 L42.67 19.01 L42.53 19.06 L42.24 19.13 L42.07 19.25 L41.93 19.09 L41.73 19.13 L41.53 19.21ZM41.31 19.25 L41.47 19.19 L41.56 19.41 L41.47 19.65 L41.36 19.62 L41.31 19.38ZM41.67 19.33 L41.96 19.21 L41.93 19.14 L41.67 19.17ZM42.67 17.91 L42.83 17.85 L43.11 17.82 L43.40 17.58 L43.20 17.42 L42.91 17.19 L42.87 17.55 L42.71 17.64ZM42.93 17.08 L43.13 16.94 L43.07 16.38 L43.13 15.64 L43.04 15.34 L42.93 15.86 L42.93 16.59ZM40.13 20.53 L40.27 20.56 L40.20 20.85 L40.11 21.01 L40.01 20.85 L40.03 20.70ZM38.48 21.39 L38.67 21.26 L38.80 21.33 L38.67 21.52 L38.51 21.49ZM40.08 21.49 L40.29 21.49 L40.27 21.70 L40.20 21.91 L40.53 22.25 L40.56 22.32 L40.33 22.14 L40.11 22.13 L40.00 21.98 L40.04 21.77ZM40.27 23.06 L40.53 22.80 L40.73 22.69 L40.87 23.06 L40.73 23.25 L40.53 23.16 L40.33 22.96ZM40.40 22.46 L40.73 22.46 L40.67 22.66 L40.33 22.69ZM39.63 22.86 L39.93 22.48 L39.97 22.55 L39.67 22.90ZM36.71 23.25 L37.00 23.31 L37.40 23.73 L37.80 24.13 L38.13 24.43 L38.12 24.77 L37.93 24.77 L37.64 24.53 L37.37 24.11 L37.13 23.77ZM38.03 24.91 L38.40 24.84 L38.73 24.91 L39.03 24.92 L39.27 25.04 L39.25 25.15 L38.80 25.10 L38.40 25.04 L38.07 24.94ZM38.53 23.80 L38.61 23.73 L38.80 23.67 L39.07 23.57 L39.40 23.27 L39.57 23.06 L39.80 23.27 L39.89 23.33 L39.73 23.44 L39.71 23.87 L39.53 24.13 L39.53 24.47 L39.27 24.53 L38.91 24.44 L38.69 24.39 L38.56 24.07ZM39.93 24.73 L40.07 24.73 L40.11 24.33 L40.27 24.64 L40.40 24.60 L40.20 24.24 L40.44 24.12 L40.13 24.07 L40.07 23.93 L40.60 23.84 L40.69 23.80 L40.53 23.93 L40.00 23.91 L39.93 24.07 L39.87 24.47ZM41.47 24.17 L41.60 24.05 L41.87 24.12 L42.07 24.44 L42.33 24.20 L42.80 24.35 L43.27 24.51 L43.53 24.73 L43.71 24.84 L43.73 25.07 L44.07 25.41 L43.73 25.34 L43.47 25.11 L43.20 25.03 L43.00 25.23 L42.80 25.22 L42.53 25.08 L42.37 24.71 L42.00 24.57 L41.73 24.53 L41.60 24.37ZM40.53 25.37 L40.67 25.20 L40.97 25.12 L40.80 25.23ZM39.33 25.10 L39.53 25.11 L39.87 25.11 L40.40 25.11 L40.33 25.18 L39.80 25.19 L39.40 25.18ZM39.20 27.01 L39.20 27.59 L39.13 27.67 L39.32 28.04 L39.43 28.49 L39.33 28.87 L39.73 28.99 L40.13 28.79 L40.53 28.67 L40.80 28.55 L41.20 28.46 L41.49 28.43 L41.89 28.62 L42.08 28.97 L42.37 28.60 L42.40 28.91 L42.47 29.09 L42.60 29.23 L42.77 29.49 L43.13 29.62 L43.32 29.45 L43.51 29.67 L43.73 29.45 L44.00 29.40 L44.01 29.15 L44.16 28.81 L44.33 28.51 L44.48 27.92 L44.41 27.74 L44.40 27.44 L44.13 27.23 L43.93 27.05 L43.80 26.79 L43.49 26.57 L43.40 26.23 L43.37 26.02 L43.13 25.89 L43.00 25.44 L42.88 25.68 L42.87 26.02 L42.77 26.37 L42.60 26.37 L42.33 26.16 L42.13 26.02 L42.23 25.64 L42.00 25.64 L41.67 25.54 L41.44 25.67 L41.27 26.01 L41.07 26.02 L40.87 25.89 L40.60 26.20 L40.29 26.44 L40.13 26.65 L39.80 26.77 L39.53 26.82ZM43.29 29.95 L43.77 29.99 L43.76 30.22 L43.60 30.47 L43.40 30.33ZM47.03 28.89 L47.24 29.12 L47.44 29.40 L47.80 29.43 L47.72 29.69 L47.53 29.92 L47.31 30.06 L47.27 29.79 L47.17 29.69 L47.29 29.40 L47.07 29.07ZM47.03 29.92 L47.24 30.13 L47.07 30.45 L46.80 30.70 L46.53 31.04 L46.20 30.92 L46.27 30.73 L46.47 30.55 L46.73 30.33 L46.93 30.09ZM0.00 33.54 L16.00 33.54 L15.33 33.54 L16.40 33.54 L15.73 33.54 L14.67 33.54 L0.00 33.54ZM3.19 21.42 L3.36 21.35 L3.23 21.23 L3.20 21.32ZM3.11 21.19 L3.20 21.18 L3.15 21.14ZM2.89 21.09 L2.97 21.09 L2.93 21.03ZM2.69 20.99 L2.76 20.98 L2.73 20.95ZM16.03 31.99 L16.29 32.04 L16.20 32.21 L15.93 32.14ZM21.76 20.11 L21.85 20.03 L22.20 19.93 L22.15 20.08 L21.92 20.14ZM45.87 26.75 L46.07 26.86 L46.27 27.05 L46.13 27.04 L45.91 26.84ZM45.20 25.07 L45.44 25.23 L45.60 25.41 L45.40 25.34 L45.23 25.18ZM46.20 26.02 L46.33 26.09 L46.44 26.37 L46.33 26.27ZM2.00 15.37 L2.33 15.32 L2.07 15.41ZM1.53 15.59 L1.80 15.48 L1.67 15.52ZM1.00 15.70 L1.27 15.66 L1.13 15.61ZM0.40 15.92 L0.60 15.86 L0.47 15.88ZM13.53 20.33 L13.73 20.29 L13.67 20.44ZM13.60 20.58 L13.67 20.53 L13.63 20.66ZM1.27 13.04 L1.51 13.10 L1.40 12.95ZM1.80 13.89 L1.96 13.80 L1.83 13.78ZM43.53 17.51 L43.80 17.27 L44.00 17.08 L43.67 17.36ZM44.27 16.88 L44.53 16.59 L44.73 16.24 L44.47 16.69ZM15.75 22.66 L15.88 22.55 L15.77 22.55ZM31.37 26.85 L31.44 26.91 L31.40 26.89ZM31.65 26.72 L31.71 26.79 L31.65 26.78ZM20.83 21.98 L20.88 21.94 L20.85 21.99ZM20.64 18.57 L20.56 18.55 L20.60 18.53ZM41.04 24.40 L41.33 24.39 L41.44 24.48 L41.13 24.49ZM40.97 23.75 L41.07 23.69 L41.16 23.89 L41.04 23.97 L41.00 23.87ZM41.93 24.73 L41.97 24.91 L41.89 24.87ZM44.00 24.64 L44.27 24.56 L44.33 24.73 L44.13 24.83 L43.97 24.77ZM44.07 24.35 L44.33 24.47 L44.24 24.53Z" fill="#cdd0d4"/><g fill="#2fb3c6"><circle cx="6" cy="14" r="1.6"/><circle cx="12" cy="19" r="1.4"/><circle cx="15" cy="26" r="1.5"/><circle cx="36" cy="13" r="1.6"/><circle cx="33" cy="17" r="1.2"/></g></svg><svg style="position:absolute;left:186px;top:714px;overflow:visible" width="48" height="48" viewBox="0 0 48 48"><path d="M24 26 L38.78 43.62 A23 23 0 1 1 24.00 3.00 Z" fill="#2196f3"/><path d="M27 23 L27.00 1.00 A22 22 0 0 1 49.00 23.00 Z" fill="#fcc528"/><path d="M27 27 L47.97 28.10 A21 21 0 0 1 41.05 42.61 Z" fill="#3aa676"/></svg><svg style="position:absolute;left:286px;top:714px;overflow:visible" width="48" height="48" viewBox="0 0 48 48"><path d="M0.89 26.02 A23.2 23.2 0 0 1 24.00 0.80 L24.00 13.20 A10.8 10.8 0 0 0 13.24 24.94 Z" fill="#f23a2a"/><path d="M24.00 0.80 A23.2 23.2 0 0 1 41.77 9.09 L32.27 17.06 A10.8 10.8 0 0 0 24.00 13.20 Z" fill="#fcc528"/><path d="M41.77 9.09 A23.2 23.2 0 0 1 16.07 45.80 L20.31 34.15 A10.8 10.8 0 0 0 32.27 17.06 Z" fill="#2196f3"/><path d="M16.07 45.80 A23.2 23.2 0 0 1 0.89 26.02 L13.24 24.94 A10.8 10.8 0 0 0 20.31 34.15 Z" fill="#3aa676"/></svg><svg style="position:absolute;left:186px;top:813px;overflow:visible" width="48" height="48" viewBox="0 0 48 48"><rect x="2" y="2" width="44" height="44" fill="#222"/><g><rect x="3" y="3" width="9.5" height="9.5" fill="#1f6fc0"/><rect x="14" y="3" width="9.5" height="9.5" fill="#1f6fc0"/><rect x="25" y="3" width="9.5" height="9.5" fill="#eee"/><rect x="36" y="3" width="9.5" height="9.5" fill="#f23a2a"/><rect x="3" y="14" width="9.5" height="9.5" fill="#1f6fc0"/><rect x="14" y="14" width="9.5" height="9.5" fill="#eee"/><rect x="25" y="14" width="9.5" height="9.5" fill="#eee"/><rect x="36" y="14" width="9.5" height="9.5" fill="#f23a2a"/><rect x="3" y="25" width="9.5" height="9.5" fill="#eee"/><rect x="14" y="25" width="9.5" height="9.5" fill="#eee"/><rect x="25" y="25" width="9.5" height="9.5" fill="#eee"/><rect x="36" y="25" width="9.5" height="9.5" fill="#f23a2a"/><rect x="3" y="36" width="9.5" height="9.5" fill="#eee"/><rect x="14" y="36" width="9.5" height="9.5" fill="#eee"/><rect x="25" y="36" width="9.5" height="9.5" fill="#f23a2a"/><rect x="36" y="36" width="9.5" height="9.5" fill="#f23a2a"/></g></svg><svg style="position:absolute;left:286px;top:813px;overflow:visible" width="48" height="48" viewBox="0 0 48 48"><rect x="1" y="1" width="46" height="46" rx="4" fill="#222"/><rect x="3" y="3" width="42" height="6" fill="#5ba67f"/><rect x="3" y="11" width="14" height="5.5" fill="#fff"/><rect x="18" y="11" width="12" height="5.5" fill="#aaa"/><rect x="31" y="11" width="14" height="5.5" fill="#fff"/><rect x="3" y="18" width="14" height="5.5" fill="#fff"/><rect x="18" y="18" width="12" height="5.5" fill="#aaa"/><rect x="31" y="18" width="14" height="5.5" fill="#fff"/><rect x="3" y="25" width="14" height="5.5" fill="#fff"/><rect x="18" y="25" width="12" height="5.5" fill="#aaa"/><rect x="31" y="25" width="14" height="5.5" fill="#fff"/><rect x="3" y="32" width="14" height="5.5" fill="#fff"/><rect x="18" y="32" width="12" height="5.5" fill="#aaa"/><rect x="31" y="32" width="14" height="5.5" fill="#fff"/><rect x="3" y="39" width="14" height="5.5" fill="#fff"/><rect x="18" y="39" width="12" height="5.5" fill="#aaa"/><rect x="31" y="39" width="14" height="5.5" fill="#fff"/></svg><svg style="position:absolute;left:186px;top:913px;overflow:visible" width="48" height="48" viewBox="0 0 48 48"><text x="24" y="32" text-anchor="middle" font-family="Liberation Sans" font-weight="bold" font-size="25" fill="#3a3a40">123</text></svg><svg style="position:absolute;left:286px;top:913px;overflow:visible" width="48" height="48" viewBox="0 0 48 48"><path d="M9 40 A20 20 0 0 1 5 22" fill="none" stroke="#f23a2a" stroke-width="5"/><path d="M5 22 A20 20 0 0 1 14 8" fill="none" stroke="#f4a340" stroke-width="5"/><path d="M14 8 A20 20 0 0 1 24 4" fill="none" stroke="#fcc528" stroke-width="5"/><path d="M24 4 A20 20 0 0 1 41 14" fill="none" stroke="#1f78c8" stroke-width="5"/><path d="M41 14 A20 20 0 0 1 39 40" fill="none" stroke="#3aa676" stroke-width="5"/><g fill="#1f4fa8"><circle cx="24" cy="13" r="1.5"/><circle cx="15" cy="18" r="1.5"/><circle cx="33" cy="18" r="1.5"/><circle cx="13" cy="27" r="1.5"/><circle cx="35" cy="27" r="1.5"/><circle cx="17" cy="36" r="1.5"/><circle cx="31" cy="36" r="1.5"/></g><path d="M22 28 L38 18 L25 31 Z" fill="#6a9fd0"/><circle cx="23" cy="29" r="3" fill="#6a9fd0"/></svg><svg style="position:absolute;left:186px;top:1012px;overflow:visible" width="48" height="48" viewBox="0 0 48 48"><rect x="4" y="4" width="40" height="32" rx="3" fill="#58c0dc"/><rect x="7" y="7" width="34" height="26" rx="1" fill="none" stroke="#fff" stroke-width="1"/><path d="M18 15 L13 20 L18 25 M30 15 L35 20 L30 25 M26 13 L22 27" stroke="#fff" stroke-width="1.5" fill="none"/><rect x="0" y="37" width="48" height="5" rx="2" fill="#ccc"/></svg><svg style="position:absolute;left:286px;top:1012px;overflow:visible" width="48" height="48" viewBox="0 0 48 48"><rect x="3" y="10" width="44" height="27.5" fill="#fff" stroke="#666" stroke-width="1.5"/><path d="M9 32 V15 H14 L18 21 L22 15 H27 V32 H23 V22 L18 27 L13 22 V32 Z" fill="#555"/><path d="M35 15 V26 H31 L37 32 L43 26 H39 V15 Z" fill="#555"/></svg><svg style="position:absolute;left:186px;top:1111px;overflow:visible" width="48" height="48" viewBox="0 0 48 48"><path d="M5 38 C18 38 22 14 40 12 L46 10 V22 C30 22 26 44 10 44 L5 44 Z" fill="#2a8ee0"/><path d="M5 14 C18 14 24 34 44 34 V40 C24 40 16 20 5 20 Z" fill="#a8d8f0" fill-opacity="0.6"/></svg><svg style="position:absolute;left:286px;top:1111px;overflow:visible" width="48" height="48" viewBox="0 0 48 48"><rect x="4" y="1" width="34" height="46" fill="#fff" stroke="#666" stroke-width="1"/><circle cx="20" cy="13" r="9" fill="#fcc528"/><path d="M20 4 A9 9 0 0 1 29 13 L20 13 Z" fill="#ee7a5a"/><path d="M11 13 A9 9 0 0 1 20 4 V13 Z" fill="#ee7a5a"/><g><rect x="9" y="27" width="24" height="3" fill="#ee7a5a"/><rect x="9" y="33" width="24" height="3" fill="#ee7a5a"/><rect x="9" y="39" width="24" height="3" fill="#ee7a5a"/><rect x="9" y="27" width="6" height="3" fill="#3ab4d8"/><rect x="9" y="33" width="6" height="3" fill="#3ab4d8"/><rect x="9" y="39" width="6" height="3" fill="#3ab4d8"/></g><circle cx="40" cy="40" r="6" fill="#fff" stroke="#f4c860" stroke-width="2.5" stroke-dasharray="2.5 1.5"/><circle cx="40" cy="40" r="2.5" fill="#fff" stroke="#f4c860" stroke-width="1.5"/></svg><div style="position:absolute;left:893px;top:200px;width:2px;height:1518px;background:#e0e0e0"></div><div style="position:absolute;left:379px;top:223.5px;font-size:27px;line-height:27px;color:#111;font-weight:bold;white-space:nowrap;">Fields</div><div style="position:absolute;left:362px;top:274px;width:530px;height:80px;background:#f2f2f2"></div><div style="position:absolute;left:387px;top:285.2px;font-size:21px;line-height:21px;color:#666;font-weight:normal;white-space:nowrap;">Stream Type</div><div style="position:absolute;left:387px;top:313.1px;font-size:25px;line-height:25px;color:#111;font-weight:normal;white-space:nowrap;">logs</div><svg style="position:absolute;left:834px;top:309px;overflow:visible" width="20" height="11" viewBox="0 0 20 11"><path d="M0 0 H20 L10 11 Z" fill="#666"/></svg><div style="position:absolute;left:362px;top:362px;width:530px;height:80px;background:#f2f2f2"></div><div style="position:absolute;left:387px;top:373.7px;font-size:21px;line-height:21px;color:#666;font-weight:normal;white-space:nowrap;">Stream</div><div style="position:absolute;left:387px;top:401.5px;font-size:24px;line-height:24px;color:#111;font-weight:normal;white-space:nowrap;">_rumdata</div><svg style="position:absolute;left:834px;top:397px;overflow:visible" width="20" height="11" viewBox="0 0 20 11"><path d="M0 0 H20 L10 11 Z" fill="#666"/></svg><div style="position:absolute;left:362px;top:450px;width:530px;height:80px;background:#f2f2f2"></div><svg style="position:absolute;left:384px;top:465px;" width="46" height="46" viewBox="0 0 24 24"><path fill="#666" d="M15.5 14h-.79l-.28-.27C15.41 12.59 16 11.11 16 9.5 16 5.91 13.09 3 9.5 3S3 5.91 3 9.5 5.91 16 9.5 16c1.61 0 3.09-.59 4.23-1.57l.27.28v.79l5 4.99L20.49 19l-4.99-5zm-6 0C7.01 14 5 11.99 5 9.5S7.01 5 9.5 5 14 7.01 14 9.5 11.99 14 9.5 14z"/></svg><div style="position:absolute;left:447px;top:475.1px;font-size:28px;line-height:28px;color:#666;font-weight:normal;white-space:nowrap;">Search for a field</div><div style="position:absolute;left:362px;top:530px;width:518px;height:1058px;overflow:hidden"><div style="position:absolute;left:96px;top:-20.0px;font-size:26px;line-height:26px;color:#111;white-space:nowrap">error_handling_stack</div><svg style="position:absolute;left:27px;top:-17px" width="12" height="22" viewBox="0 0 12 22"><g fill="#bbb"><circle cx="2.5" cy="3" r="2.3"/><circle cx="9.5" cy="3" r="2.3"/><circle cx="2.5" cy="11" r="2.3"/><circle cx="9.5" cy="11" r="2.3"/><circle cx="2.5" cy="19" r="2.3"/><circle cx="9.5" cy="19" r="2.3"/></g></svg><svg style="position:absolute;left:57px;top:-17px" width="22" height="19" viewBox="0 0 22 19"><g fill="#999"><rect x="0" y="0" width="13" height="3"/><rect x="5" y="0" width="3" height="19"/><rect x="10" y="7" width="12" height="3"/><rect x="14.5" y="7" width="3" height="12"/></g></svg><div style="position:absolute;left:96px;top:36.0px;font-size:26px;line-height:26px;color:#111;white-space:nowrap">error_id</div><svg style="position:absolute;left:27px;top:39px" width="12" height="22" viewBox="0 0 12 22"><g fill="#bbb"><circle cx="2.5" cy="3" r="2.3"/><circle cx="9.5" cy="3" r="2.3"/><circle cx="2.5" cy="11" r="2.3"/><circle cx="9.5" cy="11" r="2.3"/><circle cx="2.5" cy="19" r="2.3"/><circle cx="9.5" cy="19" r="2.3"/></g></svg><svg style="position:absolute;left:57px;top:39px" width="22" height="19" viewBox="0 0 22 19"><g fill="#999"><rect x="0" y="0" width="13" height="3"/><rect x="5" y="0" width="3" height="19"/><rect x="10" y="7" width="12" height="3"/><rect x="14.5" y="7" width="3" height="12"/></g></svg><div style="position:absolute;left:96px;top:92.0px;font-size:26px;line-height:26px;color:#111;white-space:nowrap">error_message</div><svg style="position:absolute;left:27px;top:95px" width="12" height="22" viewBox="0 0 12 22"><g fill="#bbb"><circle cx="2.5" cy="3" r="2.3"/><circle cx="9.5" cy="3" r="2.3"/><circle cx="2.5" cy="11" r="2.3"/><circle cx="9.5" cy="11" r="2.3"/><circle cx="2.5" cy="19" r="2.3"/><circle cx="9.5" cy="19" r="2.3"/></g></svg><svg style="position:absolute;left:57px;top:95px" width="22" height="19" viewBox="0 0 22 19"><g fill="#999"><rect x="0" y="0" width="13" height="3"/><rect x="5" y="0" width="3" height="19"/><rect x="10" y="7" width="12" height="3"/><rect x="14.5" y="7" width="3" height="12"/></g></svg><div style="position:absolute;left:96px;top:148.0px;font-size:26px;line-height:26px;color:#111;white-space:nowrap">error_source</div><svg style="position:absolute;left:27px;top:151px" width="12" height="22" viewBox="0 0 12 22"><g fill="#bbb"><circle cx="2.5" cy="3" r="2.3"/><circle cx="9.5" cy="3" r="2.3"/><circle cx="2.5" cy="11" r="2.3"/><circle cx="9.5" cy="11" r="2.3"/><circle cx="2.5" cy="19" r="2.3"/><circle cx="9.5" cy="19" r="2.3"/></g></svg><svg style="position:absolute;left:57px;top:151px" width="22" height="19" viewBox="0 0 22 19"><g fill="#999"><rect x="0" y="0" width="13" height="3"/><rect x="5" y="0" width="3" height="19"/><rect x="10" y="7" width="12" height="3"/><rect x="14.5" y="7" width="3" height="12"/></g></svg><div style="position:absolute;left:96px;top:204.0px;font-size:26px;line-height:26px;color:#111;white-space:nowrap">error_source_type</div><svg style="position:absolute;left:27px;top:207px" width="12" height="22" viewBox="0 0 12 22"><g fill="#bbb"><circle cx="2.5" cy="3" r="2.3"/><circle cx="9.5" cy="3" r="2.3"/><circle cx="2.5" cy="11" r="2.3"/><circle cx="9.5" cy="11" r="2.3"/><circle cx="2.5" cy="19" r="2.3"/><circle cx="9.5" cy="19" r="2.3"/></g></svg><svg style="position:absolute;left:57px;top:207px" width="22" height="19" viewBox="0 0 22 19"><g fill="#999"><rect x="0" y="0" width="13" height="3"/><rect x="5" y="0" width="3" height="19"/><rect x="10" y="7" width="12" height="3"/><rect x="14.5" y="7" width="3" height="12"/></g></svg><div style="position:absolute;left:96px;top:260.0px;font-size:26px;line-height:26px;color:#111;white-space:nowrap">error_stack</div><svg style="position:absolute;left:27px;top:263px" width="12" height="22" viewBox="0 0 12 22"><g fill="#bbb"><circle cx="2.5" cy="3" r="2.3"/><circle cx="9.5" cy="3" r="2.3"/><circle cx="2.5" cy="11" r="2.3"/><circle cx="9.5" cy="11" r="2.3"/><circle cx="2.5" cy="19" r="2.3"/><circle cx="9.5" cy="19" r="2.3"/></g></svg><svg style="position:absolute;left:57px;top:263px" width="22" height="19" viewBox="0 0 22 19"><g fill="#999"><rect x="0" y="0" width="13" height="3"/><rect x="5" y="0" width="3" height="19"/><rect x="10" y="7" width="12" height="3"/><rect x="14.5" y="7" width="3" height="12"/></g></svg><div style="position:absolute;left:96px;top:316.0px;font-size:26px;line-height:26px;color:#111;white-space:nowrap">error_type</div><svg style="position:absolute;left:27px;top:319px" width="12" height="22" viewBox="0 0 12 22"><g fill="#bbb"><circle cx="2.5" cy="3" r="2.3"/><circle cx="9.5" cy="3" r="2.3"/><circle cx="2.5" cy="11" r="2.3"/><circle cx="9.5" cy="11" r="2.3"/><circle cx="2.5" cy="19" r="2.3"/><circle cx="9.5" cy="19" r="2.3"/></g></svg><svg style="position:absolute;left:57px;top:319px" width="22" height="19" viewBox="0 0 22 19"><g fill="#999"><rect x="0" y="0" width="13" height="3"/><rect x="5" y="0" width="3" height="19"/><rect x="10" y="7" width="12" height="3"/><rect x="14.5" y="7" width="3" height="12"/></g></svg><div style="position:absolute;left:96px;top:372.0px;font-size:26px;line-height:26px;color:#111;white-space:nowrap">geo_info_city</div><svg style="position:absolute;left:27px;top:375px" width="12" height="22" viewBox="0 0 12 22"><g fill="#bbb"><circle cx="2.5" cy="3" r="2.3"/><circle cx="9.5" cy="3" r="2.3"/><circle cx="2.5" cy="11" r="2.3"/><circle cx="9.5" cy="11" r="2.3"/><circle cx="2.5" cy="19" r="2.3"/><circle cx="9.5" cy="19" r="2.3"/></g></svg><svg style="position:absolute;left:57px;top:375px" width="22" height="19" viewBox="0 0 22 19"><g fill="#999"><rect x="0" y="0" width="13" height="3"/><rect x="5" y="0" width="3" height="19"/><rect x="10" y="7" width="12" height="3"/><rect x="14.5" y="7" width="3" height="12"/></g></svg><div style="position:absolute;left:96px;top:428.0px;font-size:26px;line-height:26px;color:#111;white-space:nowrap">geo_info_country</div><svg style="position:absolute;left:27px;top:431px" width="12" height="22" viewBox="0 0 12 22"><g fill="#bbb"><circle cx="2.5" cy="3" r="2.3"/><circle cx="9.5" cy="3" r="2.3"/><circle cx="2.5" cy="11" r="2.3"/><circle cx="9.5" cy="11" r="2.3"/><circle cx="2.5" cy="19" r="2.3"/><circle cx="9.5" cy="19" r="2.3"/></g></svg><svg style="position:absolute;left:57px;top:431px" width="22" height="19" viewBox="0 0 22 19"><g fill="#999"><rect x="0" y="0" width="13" height="3"/><rect x="5" y="0" width="3" height="19"/><rect x="10" y="7" width="12" height="3"/><rect x="14.5" y="7" width="3" height="12"/></g></svg><div style="position:absolute;left:96px;top:484.0px;font-size:26px;line-height:26px;color:#111;white-space:nowrap">geo_info_country_iso_code</div><svg style="position:absolute;left:27px;top:487px" width="12" height="22" viewBox="0 0 12 22"><g fill="#bbb"><circle cx="2.5" cy="3" r="2.3"/><circle cx="9.5" cy="3" r="2.3"/><circle cx="2.5" cy="11" r="2.3"/><circle cx="9.5" cy="11" r="2.3"/><circle cx="2.5" cy="19" r="2.3"/><circle cx="9.5" cy="19" r="2.3"/></g></svg><svg style="position:absolute;left:57px;top:487px" width="22" height="19" viewBox="0 0 22 19"><g fill="#999"><rect x="0" y="0" width="13" height="3"/><rect x="5" y="0" width="3" height="19"/><rect x="10" y="7" width="12" height="3"/><rect x="14.5" y="7" width="3" height="12"/></g></svg><div style="position:absolute;left:96px;top:540.0px;font-size:26px;line-height:26px;color:#111;white-space:nowrap">geo_info_location_accuracy_radius</div><svg style="position:absolute;left:27px;top:543px" width="12" height="22" viewBox="0 0 12 22"><g fill="#bbb"><circle cx="2.5" cy="3" r="2.3"/><circle cx="9.5" cy="3" r="2.3"/><circle cx="2.5" cy="11" r="2.3"/><circle cx="9.5" cy="11" r="2.3"/><circle cx="2.5" cy="19" r="2.3"/><circle cx="9.5" cy="19" r="2.3"/></g></svg><svg style="position:absolute;left:57px;top:542px" width="22" height="22" viewBox="0 0 22 22"><path d="M7.5 1 V21 M14.5 1 V21 M1.5 7 H19.5 M1.5 14.5 H19.5" stroke="#a0a0a0" stroke-width="2.2"/></svg><div style="position:absolute;left:96px;top:596.0px;font-size:26px;line-height:26px;color:#111;white-space:nowrap">geo_info_location_latitude</div><svg style="position:absolute;left:27px;top:599px" width="12" height="22" viewBox="0 0 12 22"><g fill="#bbb"><circle cx="2.5" cy="3" r="2.3"/><circle cx="9.5" cy="3" r="2.3"/><circle cx="2.5" cy="11" r="2.3"/><circle cx="9.5" cy="11" r="2.3"/><circle cx="2.5" cy="19" r="2.3"/><circle cx="9.5" cy="19" r="2.3"/></g></svg><svg style="position:absolute;left:57px;top:598px" width="22" height="22" viewBox="0 0 22 22"><path d="M7.5 1 V21 M14.5 1 V21 M1.5 7 H19.5 M1.5 14.5 H19.5" stroke="#a0a0a0" stroke-width="2.2"/></svg><div style="position:absolute;left:96px;top:652.0px;font-size:26px;line-height:26px;color:#111;white-space:nowrap">geo_info_location_longitude</div><svg style="position:absolute;left:27px;top:655px" width="12" height="22" viewBox="0 0 12 22"><g fill="#bbb"><circle cx="2.5" cy="3" r="2.3"/><circle cx="9.5" cy="3" r="2.3"/><circle cx="2.5" cy="11" r="2.3"/><circle cx="9.5" cy="11" r="2.3"/><circle cx="2.5" cy="19" r="2.3"/><circle cx="9.5" cy="19" r="2.3"/></g></svg><svg style="position:absolute;left:57px;top:654px" width="22" height="22" viewBox="0 0 22 22"><path d="M7.5 1 V21 M14.5 1 V21 M1.5 7 H19.5 M1.5 14.5 H19.5" stroke="#a0a0a0" stroke-width="2.2"/></svg><div style="position:absolute;left:96px;top:708.0px;font-size:26px;line-height:26px;color:#111;white-space:nowrap">geo_info_location_metro_code</div><svg style="position:absolute;left:27px;top:711px" width="12" height="22" viewBox="0 0 12 22"><g fill="#bbb"><circle cx="2.5" cy="3" r="2.3"/><circle cx="9.5" cy="3" r="2.3"/><circle cx="2.5" cy="11" r="2.3"/><circle cx="9.5" cy="11" r="2.3"/><circle cx="2.5" cy="19" r="2.3"/><circle cx="9.5" cy="19" r="2.3"/></g></svg><svg style="position:absolute;left:57px;top:710px" width="22" height="22" viewBox="0 0 22 22"><path d="M7.5 1 V21 M14.5 1 V21 M1.5 7 H19.5 M1.5 14.5 H19.5" stroke="#a0a0a0" stroke-width="2.2"/></svg><div style="position:absolute;left:96px;top:764.0px;font-size:26px;line-height:26px;color:#111;white-space:nowrap">geo_info_location_time_zone</div><svg style="position:absolute;left:27px;top:767px" width="12" height="22" viewBox="0 0 12 22"><g fill="#bbb"><circle cx="2.5" cy="3" r="2.3"/><circle cx="9.5" cy="3" r="2.3"/><circle cx="2.5" cy="11" r="2.3"/><circle cx="9.5" cy="11" r="2.3"/><circle cx="2.5" cy="19" r="2.3"/><circle cx="9.5" cy="19" r="2.3"/></g></svg><svg style="position:absolute;left:57px;top:767px" width="22" height="19" viewBox="0 0 22 19"><g fill="#999"><rect x="0" y="0" width="13" height="3"/><rect x="5" y="0" width="3" height="19"/><rect x="10" y="7" width="12" height="3"/><rect x="14.5" y="7" width="3" height="12"/></g></svg><div style="position:absolute;left:96px;top:820.0px;font-size:26px;line-height:26px;color:#111;white-space:nowrap">ip</div><svg style="position:absolute;left:27px;top:823px" width="12" height="22" viewBox="0 0 12 22"><g fill="#bbb"><circle cx="2.5" cy="3" r="2.3"/><circle cx="9.5" cy="3" r="2.3"/><circle cx="2.5" cy="11" r="2.3"/><circle cx="9.5" cy="11" r="2.3"/><circle cx="2.5" cy="19" r="2.3"/><circle cx="9.5" cy="19" r="2.3"/></g></svg><svg style="position:absolute;left:57px;top:823px" width="22" height="19" viewBox="0 0 22 19"><g fill="#999"><rect x="0" y="0" width="13" height="3"/><rect x="5" y="0" width="3" height="19"/><rect x="10" y="7" width="12" height="3"/><rect x="14.5" y="7" width="3" height="12"/></g></svg><div style="position:absolute;left:96px;top:876.0px;font-size:26px;line-height:26px;color:#111;white-space:nowrap">long_task_duration</div><svg style="position:absolute;left:27px;top:879px" width="12" height="22" viewBox="0 0 12 22"><g fill="#bbb"><circle cx="2.5" cy="3" r="2.3"/><circle cx="9.5" cy="3" r="2.3"/><circle cx="2.5" cy="11" r="2.3"/><circle cx="9.5" cy="11" r="2.3"/><circle cx="2.5" cy="19" r="2.3"/><circle cx="9.5" cy="19" r="2.3"/></g></svg><svg style="position:absolute;left:57px;top:878px" width="22" height="22" viewBox="0 0 22 22"><path d="M7.5 1 V21 M14.5 1 V21 M1.5 7 H19.5 M1.5 14.5 H19.5" stroke="#a0a0a0" stroke-width="2.2"/></svg><div style="position:absolute;left:96px;top:932.0px;font-size:26px;line-height:26px;color:#111;white-space:nowrap">long_task_id</div><svg style="position:absolute;left:27px;top:935px" width="12" height="22" viewBox="0 0 12 22"><g fill="#bbb"><circle cx="2.5" cy="3" r="2.3"/><circle cx="9.5" cy="3" r="2.3"/><circle cx="2.5" cy="11" r="2.3"/><circle cx="9.5" cy="11" r="2.3"/><circle cx="2.5" cy="19" r="2.3"/><circle cx="9.5" cy="19" r="2.3"/></g></svg><svg style="position:absolute;left:57px;top:935px" width="22" height="19" viewBox="0 0 22 19"><g fill="#999"><rect x="0" y="0" width="13" height="3"/><rect x="5" y="0" width="3" height="19"/><rect x="10" y="7" width="12" height="3"/><rect x="14.5" y="7" width="3" height="12"/></g></svg><div style="position:absolute;left:96px;top:988.0px;font-size:26px;line-height:26px;color:#111;white-space:nowrap">o2_evp_origin</div><svg style="position:absolute;left:27px;top:991px" width="12" height="22" viewBox="0 0 12 22"><g fill="#bbb"><circle cx="2.5" cy="3" r="2.3"/><circle cx="9.5" cy="3" r="2.3"/><circle cx="2.5" cy="11" r="2.3"/><circle cx="9.5" cy="11" r="2.3"/><circle cx="2.5" cy="19" r="2.3"/><circle cx="9.5" cy="19" r="2.3"/></g></svg><svg style="position:absolute;left:57px;top:991px" width="22" height="19" viewBox="0 0 22 19"><g fill="#999"><rect x="0" y="0" width="13" height="3"/><rect x="5" y="0" width="3" height="19"/><rect x="10" y="7" width="12" height="3"/><rect x="14.5" y="7" width="3" height="12"/></g></svg><div style="position:absolute;left:96px;top:1044.0px;font-size:26px;line-height:26px;color:#111;white-space:nowrap">o2_evp_origin_version</div><svg style="position:absolute;left:27px;top:1047px" width="12" height="22" viewBox="0 0 12 22"><g fill="#bbb"><circle cx="2.5" cy="3" r="2.3"/><circle cx="9.5" cy="3" r="2.3"/><circle cx="2.5" cy="11" r="2.3"/><circle cx="9.5" cy="11" r="2.3"/><circle cx="2.5" cy="19" r="2.3"/><circle cx="9.5" cy="19" r="2.3"/></g></svg><svg style="position:absolute;left:57px;top:1047px" width="22" height="19" viewBox="0 0 22 19"><g fill="#999"><rect x="0" y="0" width="13" height="3"/><rect x="5" y="0" width="3" height="19"/><rect x="10" y="7" width="12" height="3"/><rect x="14.5" y="7" width="3" height="12"/></g></svg></div><div style="position:absolute;left:880px;top:530px;width:12px;height:1058px;background:#c5c6e6"></div><div style="position:absolute;left:880px;top:724px;width:12px;height:114px;background:#5a5fb0"></div><div style="position:absolute;left:362px;top:1587px;width:530px;height:2px;background:#e0e0e0"></div><div style="position:absolute;left:395px;top:1598px;width:213px;height:46px;box-sizing:border-box;border:2px solid #d4d4d4;border-radius:9px;background:#fff"></div><div style="position:absolute;left:397px;top:1600px;width:118px;height:42px;background:#5b5fb0;border-radius:7px 0 0 7px"></div><svg style="position:absolute;left:430px;top:1607px;overflow:visible" width="52" height="28" viewBox="0 0 52 28"><g fill="#fff"><circle cx="10" cy="7" r="5"/><path d="M0 22 C0 16 5 14 10 14 C15 14 20 16 20 22 Z"/><rect x="29" y="2" width="6" height="24"/><rect x="28" y="2" width="8" height="6"/><rect x="28" y="11" width="8" height="6"/><rect x="28" y="20" width="8" height="6"/><rect x="35" y="12" width="6" height="4"/><rect x="40" y="10" width="10" height="8"/></g></svg><svg style="position:absolute;left:549px;top:1607px;overflow:visible" width="26" height="28" viewBox="0 0 26 28"><g fill="#5b5fb0"><rect x="3" y="2" width="6" height="24"/><rect x="2" y="2" width="8" height="6"/><rect x="2" y="11" width="8" height="6"/><rect x="2" y="20" width="8" height="6"/><rect x="9" y="12" width="6" height="4"/><rect x="14" y="10" width="10" height="8"/></g></svg><div style="position:absolute;left:867px;top:201px;width:39px;height:39px;background:#5b5fb0;border-radius:50%"></div><svg style="position:absolute;left:880px;top:210px;overflow:visible" width="14" height="20" viewBox="0 0 14 20"><g fill="#fff"><circle cx="4.3" cy="5" r="1.8"/><circle cx="9.6" cy="5" r="1.8"/><circle cx="4.3" cy="10" r="1.8"/><circle cx="9.6" cy="10" r="1.8"/><circle cx="4.3" cy="15" r="1.8"/><circle cx="9.6" cy="15" r="1.8"/></g></svg><div style="position:absolute;left:895px;top:274px;width:2016px;height:2px;background:#e0e0e0"></div><div style="position:absolute;left:895px;top:350px;width:2016px;height:2px;background:#e0e0e0"></div><div style="position:absolute;left:895px;top:426px;width:2016px;height:2px;background:#e0e0e0"></div><div style="position:absolute;left:895px;top:495px;width:2016px;height:2px;background:#e0e0e0"></div><div style="position:absolute;left:2910px;top:200px;width:2px;height:1518px;background:#e0e0e0"></div><div style="position:absolute;left:927px;top:223.3px;font-size:28px;line-height:28px;color:#111;font-weight:normal;white-space:nowrap;">Latitude</div><div style="position:absolute;left:1190px;top:223.3px;font-size:28px;line-height:28px;color:#111;font-weight:normal;white-space:nowrap;">:</div><div style="position:absolute;left:1205px;top:213px;width:369px;height:48px;box-sizing:border-box;border:2px solid #dadada;border-radius:10px"></div><div style="position:absolute;left:1232px;top:214px;width:304px;height:46px;background:#5b5fb0"></div><div style="position:absolute;left:1249px;top:227.1px;font-size:20px;line-height:20px;color:#fff;font-weight:normal;white-space:nowrap;">geo_info_location_latitude</div><svg style="position:absolute;left:1505px;top:233px;overflow:visible" width="15" height="8" viewBox="0 0 15 8"><path d="M0 0 H15 L7.5 8 Z" fill="#fff"/></svg><svg style="position:absolute;left:1540px;top:222px;" width="30" height="30" viewBox="0 0 24 24"><path fill="#111" d="M19 6.41L17.59 5 12 10.59 6.41 5 5 6.41 10.59 12 5 17.59 6.41 19 12 13.41 17.59 19 19 17.59 13.41 12z"/></svg><svg style="position:absolute;left:1214px;top:219px;overflow:visible" width="12" height="17" viewBox="0 0 12 17"><g fill="#bbb"><circle cx="2" cy="2" r="1.8"/><circle cx="8" cy="2" r="1.8"/><circle cx="2" cy="8" r="1.8"/><circle cx="8" cy="8" r="1.8"/><circle cx="2" cy="14" r="1.8"/><circle cx="8" cy="14" r="1.8"/></g></svg><div style="position:absolute;left:927px;top:298.3px;font-size:28px;line-height:28px;color:#111;font-weight:normal;white-space:nowrap;">Longitude</div><div style="position:absolute;left:1190px;top:298.3px;font-size:28px;line-height:28px;color:#111;font-weight:normal;white-space:nowrap;">:</div><div style="position:absolute;left:1205px;top:289px;width:385px;height:48px;box-sizing:border-box;border:2px solid #dadada;border-radius:10px"></div><div style="position:absolute;left:1232px;top:290px;width:321px;height:46px;background:#5b5fb0"></div><div style="position:absolute;left:1249px;top:303.1px;font-size:20px;line-height:20px;color:#fff;font-weight:normal;white-space:nowrap;">geo_info_location_longitude</div><svg style="position:absolute;left:1522px;top:309px;overflow:visible" width="15" height="8" viewBox="0 0 15 8"><path d="M0 0 H15 L7.5 8 Z" fill="#fff"/></svg><svg style="position:absolute;left:1557px;top:298px;" width="30" height="30" viewBox="0 0 24 24"><path fill="#111" d="M19 6.41L17.59 5 12 10.59 6.41 5 5 6.41 10.59 12 5 17.59 6.41 19 12 13.41 17.59 19 19 17.59 13.41 12z"/></svg><svg style="position:absolute;left:1214px;top:295px;overflow:visible" width="12" height="17" viewBox="0 0 12 17"><g fill="#bbb"><circle cx="2" cy="2" r="1.8"/><circle cx="8" cy="2" r="1.8"/><circle cx="2" cy="8" r="1.8"/><circle cx="8" cy="8" r="1.8"/><circle cx="2" cy="14" r="1.8"/><circle cx="8" cy="14" r="1.8"/></g></svg><div style="position:absolute;left:927px;top:374.3px;font-size:28px;line-height:28px;color:#111;font-weight:normal;white-space:nowrap;">Weight</div><div style="position:absolute;left:1190px;top:374.3px;font-size:28px;line-height:28px;color:#111;font-weight:normal;white-space:nowrap;">:</div><div style="position:absolute;left:1205px;top:364px;width:369px;height:48px;box-sizing:border-box;border:2px solid #dadada;border-radius:10px"></div><div style="position:absolute;left:1232px;top:365px;width:304px;height:46px;background:#5b5fb0"></div><div style="position:absolute;left:1249px;top:378.1px;font-size:20px;line-height:20px;color:#fff;font-weight:normal;white-space:nowrap;">COUNT(geo_info_country)</div><svg style="position:absolute;left:1505px;top:384px;overflow:visible" width="15" height="8" viewBox="0 0 15 8"><path d="M0 0 H15 L7.5 8 Z" fill="#fff"/></svg><svg style="position:absolute;left:1540px;top:373px;" width="30" height="30" viewBox="0 0 24 24"><path fill="#111" d="M19 6.41L17.59 5 12 10.59 6.41 5 5 6.41 10.59 12 5 17.59 6.41 19 12 13.41 17.59 19 19 17.59 13.41 12z"/></svg><svg style="position:absolute;left:1214px;top:370px;overflow:visible" width="12" height="17" viewBox="0 0 12 17"><g fill="#bbb"><circle cx="2" cy="2" r="1.8"/><circle cx="8" cy="2" r="1.8"/><circle cx="2" cy="8" r="1.8"/><circle cx="8" cy="8" r="1.8"/><circle cx="2" cy="14" r="1.8"/><circle cx="8" cy="14" r="1.8"/></g></svg><svg style="position:absolute;left:1037px;top:223px;" width="28" height="28" viewBox="0 0 24 24"><path fill="#111" d="M11 7h2v2h-2zm0 4h2v6h-2zm1-9C6.48 2 2 6.48 2 12s4.48 10 10 10 10-4.48 10-10S17.52 2 12 2zm0 18c-4.41 0-8-3.59-8-8s3.59-8 8-8 8 3.59 8 8-3.59 8-8 8z"/></svg><svg style="position:absolute;left:1060px;top:298px;" width="28" height="28" viewBox="0 0 24 24"><path fill="#111" d="M11 7h2v2h-2zm0 4h2v6h-2zm1-9C6.48 2 2 6.48 2 12s4.48 10 10 10 10-4.48 10-10S17.52 2 12 2zm0 18c-4.41 0-8-3.59-8-8s3.59-8 8-8 8 3.59 8 8-3.59 8-8 8z"/></svg><svg style="position:absolute;left:1027px;top:374px;" width="28" height="28" viewBox="0 0 24 24"><path fill="#111" d="M11 7h2v2h-2zm0 4h2v6h-2zm1-9C6.48 2 2 6.48 2 12s4.48 10 10 10 10-4.48 10-10S17.52 2 12 2zm0 18c-4.41 0-8-3.59-8-8s3.59-8 8-8 8 3.59 8 8-3.59 8-8 8z"/></svg><div style="position:absolute;left:927px;top:446.3px;font-size:28px;line-height:28px;color:#111;font-weight:normal;white-space:nowrap;">Filters</div><div style="position:absolute;left:1190px;top:446.3px;font-size:28px;line-height:28px;color:#111;font-weight:normal;white-space:nowrap;">:</div><div style="position:absolute;left:1221px;top:438px;width:46px;height:46px;background:#5b5fb0;border-radius:50%;box-sizing:border-box;border:1px solid #c8c8d8"></div><svg style="position:absolute;left:1231px;top:448px;overflow:visible" width="26" height="26" viewBox="0 0 26 26"><path d="M13 5 V21 M5 13 H21" stroke="#fff" stroke-width="2.6"/></svg><svg style="position:absolute;left:920px;top:525px;overflow:visible" width="48" height="44" viewBox="0 0 48 44"><path d="M3 3 H37 L24 21 V40 L18 33 V21 Z" fill="none" stroke="#111" stroke-width="4" stroke-linejoin="round"/><path d="M35 30 V44 M28 37 H42" stroke="#111" stroke-width="3.5"/></svg><svg style="position:absolute;left:2944px;top:225px;overflow:visible" width="36" height="30" viewBox="0 0 36 30"><path d="M3 2 V28 M33 2 V28 M7 15 H29" stroke="#111" stroke-width="3.5"/><path d="M6 15 L13 9 V21 Z M30 15 L23 9 V21 Z" fill="#111"/></svg><div style="position:absolute;left:2962px;top:261px;transform-origin:0 0;transform:rotate(90deg) translate(0,-14px);font-size:26px;line-height:26px;font-weight:bold;color:#111;white-space:nowrap">Config</div><svg style="position:absolute;left:2765px;top:603px;overflow:visible" width="28" height="28" viewBox="0 0 28 28"><defs><radialGradient id="cg" cx="40%" cy="35%" r="70%"><stop offset="0" stop-color="#fff"/><stop offset="1" stop-color="#bbb"/></radialGradient></defs><circle cx="14" cy="14" r="13" fill="url(#cg)" stroke="#999" stroke-width="1"/><path d="M14 5 V14 L20 11" stroke="#777" stroke-width="1.4" fill="none"/></svg><div style="position:absolute;left:2795px;top:599.3px;font-size:28px;line-height:28px;color:#111;font-weight:normal;white-space:nowrap;">11s ago</div><svg style="position:absolute;left:904px;top:645px;overflow:hidden" width="1996" height="973" viewBox="0 0 1996 973"><rect width="1996" height="973" fill="#aad3df"/>
<path d="M-27.3 -174.2 L41.0 -54.9 L49.5 -18.0 L63.7 1.0 L80.8 2.3 L80.8 15.3 L58.0 27.9 L55.2 51.7 L75.1 59.7 L75.1 73.0 L103.5 71.9 L95.0 95.3 L75.1 107.5 L60.9 114.4 L80.8 105.5 L109.2 90.1 L123.5 73.0 L134.8 66.4 L143.4 44.7 L154.7 50.5 L166.1 48.2 L194.6 57.4 L205.9 63.1 L220.2 77.4 L234.4 95.3 L251.5 115.4 L257.1 121.2 L265.7 143.8 L271.4 150.1 L286.7 171.2 L291.3 189.7 L290.1 215.2 L289.6 235.1 L297.0 251.2 L299.8 256.3 L303.2 262.7 L310.6 276.7 L322.6 280.8 L330.0 289.7 L333.9 297.7 L338.5 308.3 L347.0 320.0 L358.4 334.1 L370.9 352.8 L369.2 344.7 L356.7 323.9 L345.3 307.7 L343.6 295.7 L353.9 299.7 L358.4 310.9 L368.1 325.2 L375.5 336.6 L390.8 351.0 L397.7 361.4 L396.5 368.7 L407.9 380.8 L427.8 389.1 L447.7 396.2 L459.1 393.3 L472.2 403.3 L487.5 409.2 L498.9 412.7 L507.5 420.8 L509.2 430.1 L518.8 434.1 L527.4 439.9 L541.0 444.5 L547.3 435.3 L555.8 441.0 L556.4 438.2 L544.4 431.8 L533.1 435.9 L521.7 424.9 L520.5 415.0 L522.8 400.4 L513.1 395.1 L494.9 395.7 L494.4 379.6 L498.9 361.4 L483.0 363.9 L481.9 373.6 L473.3 379.0 L459.1 382.0 L450.6 376.6 L443.2 361.4 L440.9 346.0 L443.7 333.4 L443.2 322.0 L458.0 311.6 L476.2 312.2 L489.3 314.2 L487.5 306.3 L498.9 305.7 L513.1 309.6 L518.8 307.0 L526.2 319.4 L531.9 333.4 L536.5 339.1 L541.0 330.3 L538.2 317.4 L533.6 304.4 L535.3 294.4 L545.6 286.3 L553.5 280.8 L567.2 272.5 L562.6 259.8 L569.5 246.9 L575.7 234.3 L587.1 230.5 L598.5 225.2 L595.1 217.6 L597.3 209.8 L615.5 201.0 L629.8 197.0 L624.1 211.3 L638.3 203.4 L655.4 188.8 L646.8 192.9 L632.6 188.0 L631.5 170.3 L618.4 165.2 L601.3 172.9 L609.9 163.4 L629.8 155.5 L655.4 154.6 L671.9 143.8 L679.3 134.5 L672.4 115.4 L655.4 105.5 L646.8 90.1 L641.1 74.1 L629.8 54.0 L624.1 68.6 L612.7 76.3 L601.3 68.6 L598.5 45.9 L587.1 36.4 L555.8 27.9 L551.8 51.7 L555.8 57.4 L558.7 84.9 L559.8 105.5 L544.4 115.4 L547.3 139.2 L538.7 146.5 L528.5 134.5 L527.4 110.5 L510.3 107.5 L491.5 92.2 L470.5 88.0 L460.8 70.9 L457.4 55.2 L461.9 40.0 L473.3 24.1 L481.9 15.3 L501.8 6.3 L501.8 -174.2ZM553.0 -79.0 L644.0 -79.0 L646.8 -25.1 L629.8 8.9 L626.9 27.9 L609.9 30.3 L589.9 19.1 L575.7 6.3 L555.8 5.0 L550.1 -11.1ZM498.9 6.3 L510.3 21.6 L535.9 11.5 L533.1 -11.1 L501.8 -18.0ZM683.8 -113.9 L700.9 -4.3 L709.4 27.9 L723.6 45.9 L746.4 59.7 L754.9 51.7 L763.5 21.6 L772.0 -11.1 L882.9 -174.2ZM860.2 -11.1 L871.5 10.2 L894.3 16.6 L911.4 6.3 L919.9 -5.7 L914.2 -22.3 L894.3 -20.9 L868.7 -23.7 L857.3 -12.5ZM513.1 359.0 L518.8 354.0 L530.2 351.0 L541.6 351.6 L555.8 359.6 L567.2 366.3 L574.6 369.3 L567.2 371.1 L554.7 371.1 L550.1 361.4 L535.9 359.0 L527.4 357.7 L513.7 359.6ZM572.9 380.2 L582.5 371.1 L598.5 372.4 L608.1 379.0 L598.5 381.4 L589.9 385.0 L572.9 382.6ZM551.3 380.2 L563.2 382.6 L555.8 383.8ZM614.4 379.6 L623.5 380.8 L615.0 383.2ZM659.3 178.0 L681.0 183.0 L695.2 186.4 L697.5 177.2 L692.3 166.0 L681.0 159.0 L681.0 142.9 L669.6 152.8 L658.2 172.1ZM556.9 437.6 L564.3 433.0 L567.2 426.6 L575.7 422.0 L587.1 415.6 L589.9 423.7 L598.5 417.9 L608.7 426.6 L621.2 426.1 L638.3 425.5 L645.1 425.5 L650.8 438.2 L663.9 446.8 L672.4 452.5 L689.5 453.6 L702.6 462.8 L709.4 476.5 L712.3 486.7 L720.8 492.4 L743.5 500.9 L763.5 503.2 L780.5 508.3 L796.5 518.0 L798.7 529.5 L795.9 541.0 L786.2 549.7 L775.4 564.2 L774.3 587.8 L766.3 605.9 L757.8 621.2 L743.5 622.4 L732.2 627.4 L720.8 643.1 L719.7 656.0 L709.4 672.3 L698.0 689.2 L689.5 698.1 L675.3 698.1 L664.5 696.0 L670.7 707.9 L669.6 722.2 L642.9 726.5 L641.1 739.1 L626.9 742.9 L633.7 754.3 L624.1 774.0 L612.7 786.2 L622.4 797.1 L608.1 818.8 L603.0 830.5 L607.6 837.9 L607.0 848.3 L619.5 862.9 L606.4 867.9 L592.8 862.9 L575.7 834.2 L567.2 816.1 L567.2 790.4 L575.7 774.0 L576.9 754.3 L578.0 735.4 L578.6 717.1 L587.1 699.5 L589.9 679.0 L589.9 652.7 L595.6 624.3 L597.3 593.8 L584.3 583.7 L563.2 564.2 L551.8 543.9 L542.7 526.6 L534.2 512.3 L539.3 503.8 L536.5 492.4 L541.6 481.6 L547.8 478.2 L555.8 465.1 L556.9 449.6 L551.8 443.9ZM1053.6 -174.2 L1059.3 2.3 L1050.7 15.3 L1036.5 24.1 L1025.1 40.0 L1025.1 57.4 L1028.0 68.6 L1033.7 78.5 L1042.2 78.5 L1050.7 68.6 L1057.0 63.1 L1059.3 69.8 L1065.0 84.9 L1069.5 95.3 L1068.4 100.4 L1077.5 106.5 L1087.7 98.4 L1090.6 84.9 L1091.7 74.1 L1101.9 65.3 L1096.3 50.5 L1094.5 40.0 L1098.0 27.9 L1107.6 15.3 L1116.2 2.3 L1121.9 -11.1 L1138.9 -4.3 L1136.1 2.3 L1124.7 15.3 L1117.9 27.9 L1119.0 45.9 L1117.3 51.7 L1127.0 58.6 L1138.9 55.2 L1153.1 51.7 L1168.5 58.6 L1156.0 63.1 L1133.2 65.3 L1130.4 70.9 L1134.9 76.3 L1133.2 90.1 L1119.0 84.9 L1116.2 92.2 L1116.7 105.5 L1110.5 112.5 L1102.5 116.4 L1090.6 115.4 L1078.1 121.2 L1067.8 115.4 L1059.3 120.3 L1053.6 115.4 L1056.4 105.5 L1055.3 97.4 L1057.0 82.7 L1043.3 90.1 L1042.8 104.5 L1045.6 111.5 L1046.8 120.3 L1042.2 124.1 L1036.5 126.0 L1023.4 130.8 L1021.7 137.3 L1018.9 141.0 L1016.0 144.7 L1010.9 147.4 L1005.8 149.2 L1005.8 155.5 L997.3 159.9 L989.9 162.5 L985.9 159.9 L987.6 168.6 L976.8 167.8 L969.4 171.2 L972.8 176.3 L982.5 180.5 L989.9 191.3 L989.3 203.4 L987.6 212.1 L975.1 212.1 L951.2 209.8 L943.8 215.2 L946.6 226.8 L942.7 246.9 L945.5 259.8 L954.6 258.4 L961.4 264.1 L964.8 266.9 L971.1 262.0 L984.2 261.3 L993.3 255.6 L997.8 246.9 L994.4 241.7 L1001.8 230.5 L1014.9 223.7 L1014.3 214.5 L1024.0 212.1 L1033.7 214.5 L1039.4 209.0 L1046.8 204.2 L1055.3 211.3 L1065.0 223.0 L1076.3 232.1 L1086.0 238.0 L1086.0 252.7 L1091.1 246.1 L1094.5 242.5 L1091.1 235.8 L1095.7 235.1 L1101.9 237.3 L1093.4 229.8 L1087.7 223.7 L1079.2 220.7 L1074.1 211.3 L1066.7 203.4 L1066.7 196.2 L1075.2 194.6 L1079.2 197.8 L1084.9 207.4 L1096.3 215.2 L1101.9 219.9 L1107.6 224.5 L1107.1 235.8 L1111.0 241.7 L1116.2 250.5 L1119.6 261.3 L1124.7 264.1 L1128.7 257.7 L1132.7 252.7 L1126.4 246.9 L1127.0 234.3 L1133.2 232.1 L1144.6 232.1 L1148.0 236.5 L1145.7 241.7 L1150.3 251.2 L1152.0 259.8 L1157.1 262.0 L1170.2 264.8 L1181.6 266.2 L1193.0 261.3 L1201.5 261.3 L1200.4 270.4 L1198.7 280.8 L1195.2 289.0 L1191.8 299.1 L1180.5 299.7 L1182.2 307.7 L1187.3 320.7 L1191.8 322.0 L1195.8 310.9 L1198.7 323.9 L1204.3 333.4 L1212.9 346.0 L1219.7 361.4 L1227.1 373.6 L1235.6 388.5 L1240.2 400.4 L1243.0 413.9 L1252.7 413.3 L1272.6 406.3 L1292.5 396.8 L1309.6 385.6 L1321.0 377.8 L1329.5 367.5 L1336.9 355.3 L1329.5 348.5 L1321.0 346.0 L1317.6 331.5 L1312.4 336.6 L1303.9 344.7 L1290.2 344.1 L1289.7 333.4 L1288.0 332.8 L1285.7 341.0 L1282.3 330.3 L1278.3 323.9 L1272.6 317.4 L1269.8 307.7 L1275.5 304.4 L1284.0 310.9 L1289.7 321.3 L1301.1 328.4 L1312.4 328.4 L1318.1 325.8 L1323.8 335.3 L1346.6 339.1 L1363.6 338.5 L1377.9 341.0 L1386.4 349.1 L1394.9 353.4 L1389.2 357.1 L1394.9 364.5 L1409.1 363.2 L1410.9 376.6 L1414.8 394.5 L1422.2 413.3 L1430.8 432.4 L1437.6 440.5 L1441.6 435.9 L1451.2 427.8 L1453.5 411.5 L1452.9 397.4 L1464.9 390.9 L1477.4 379.6 L1488.8 370.5 L1491.6 361.4 L1500.2 359.6 L1508.7 358.4 L1518.9 355.9 L1521.8 366.3 L1532.6 377.8 L1533.2 394.5 L1540.0 395.7 L1551.4 391.5 L1551.9 403.3 L1557.1 417.9 L1555.9 435.3 L1557.1 441.0 L1567.3 449.6 L1572.4 469.6 L1585.5 479.3 L1589.5 478.2 L1584.9 463.9 L1578.7 451.9 L1568.4 445.1 L1565.0 434.1 L1561.0 426.6 L1565.6 413.9 L1568.4 409.2 L1574.1 414.4 L1582.7 420.8 L1592.9 427.8 L1594.0 437.6 L1603.7 427.8 L1616.8 420.8 L1618.5 409.2 L1611.1 393.3 L1602.6 382.6 L1598.0 376.6 L1603.7 366.3 L1611.1 361.4 L1619.6 361.4 L1624.2 368.7 L1628.2 361.4 L1642.4 357.1 L1659.5 352.2 L1668.0 342.9 L1676.5 333.4 L1682.2 322.0 L1690.2 307.7 L1689.6 297.7 L1682.2 284.2 L1674.8 273.9 L1681.1 266.9 L1693.6 258.4 L1683.3 254.1 L1673.7 257.7 L1668.0 249.1 L1666.9 244.7 L1676.5 238.8 L1685.1 232.1 L1691.9 234.3 L1686.2 246.9 L1696.4 241.0 L1705.0 239.5 L1709.5 241.7 L1707.8 254.8 L1716.3 256.3 L1715.2 263.4 L1716.3 277.4 L1727.7 274.6 L1732.8 270.4 L1733.4 261.3 L1727.7 249.1 L1722.0 240.3 L1727.7 236.5 L1734.5 231.3 L1740.2 220.7 L1747.1 214.5 L1756.2 216.8 L1767.5 208.2 L1778.9 195.4 L1787.5 183.0 L1796.0 170.3 L1796.0 152.8 L1801.7 134.5 L1796.0 125.1 L1778.9 120.3 L1773.2 113.4 L1765.8 111.5 L1778.9 95.3 L1796.0 77.4 L1810.2 65.3 L1841.5 65.3 L1861.4 68.6 L1875.6 63.1 L1878.5 51.7 L1898.4 40.0 L1909.8 45.9 L1887.0 84.9 L1882.5 105.5 L1887.6 148.3 L1898.4 130.8 L1906.9 120.3 L1921.1 100.4 L1925.7 81.7 L1924.0 63.1 L1941.1 57.4 L1966.7 57.4 L1980.9 40.0 L2006.5 27.9 L2015.0 21.6 L2020.7 -4.3 L2020.7 -174.2ZM1180.5 299.7 L1173.1 297.1 L1164.5 301.1 L1138.9 297.1 L1127.5 291.0 L1113.3 291.0 L1110.5 297.7 L1104.8 305.7 L1084.9 297.7 L1070.7 288.3 L1062.1 286.3 L1054.7 279.4 L1059.3 271.8 L1056.4 262.0 L1052.5 257.7 L1045.1 260.6 L1013.8 261.3 L996.7 268.3 L985.3 273.2 L966.0 267.6 L958.0 280.8 L948.3 285.6 L942.1 305.0 L931.3 318.7 L922.7 323.9 L914.2 333.4 L906.2 347.9 L899.4 364.5 L904.5 373.6 L902.8 394.5 L897.1 402.1 L901.1 412.1 L902.8 416.2 L911.4 424.9 L919.9 432.4 L925.6 442.8 L934.1 447.9 L945.5 458.2 L954.0 461.6 L973.9 457.1 L985.3 459.4 L996.7 454.8 L1005.8 451.4 L1016.0 450.2 L1028.0 458.2 L1033.7 462.2 L1039.4 461.1 L1046.8 461.1 L1051.9 464.5 L1052.5 472.5 L1050.7 481.0 L1049.6 489.5 L1047.9 495.2 L1053.6 503.8 L1063.8 515.2 L1066.7 520.9 L1071.8 537.0 L1075.2 548.5 L1067.8 564.2 L1063.8 584.9 L1063.8 593.8 L1070.7 605.9 L1079.2 620.6 L1083.2 645.0 L1090.6 656.6 L1097.4 672.3 L1100.8 684.4 L1101.4 693.3 L1107.6 696.7 L1110.5 698.1 L1124.7 692.6 L1142.3 692.6 L1153.1 687.1 L1164.5 674.3 L1173.1 664.4 L1181.6 652.7 L1183.9 640.0 L1198.7 627.4 L1197.5 615.0 L1194.7 601.7 L1206.1 590.8 L1221.4 581.9 L1228.2 570.1 L1227.1 549.7 L1221.4 532.4 L1219.7 525.5 L1221.4 515.2 L1222.5 509.5 L1233.4 496.4 L1244.2 483.9 L1254.4 475.3 L1266.9 461.1 L1275.5 446.8 L1285.7 426.6 L1288.5 419.1 L1275.5 422.0 L1258.4 425.5 L1247.0 426.6 L1242.5 420.8 L1238.5 413.3 L1232.8 406.3 L1221.4 396.8 L1215.7 382.6 L1208.3 373.0 L1204.3 358.4 L1198.7 346.0 L1193.0 333.4 L1187.3 323.9 L1182.2 308.3ZM1277.2 555.5 L1284.0 576.0 L1280.0 584.9 L1272.6 605.9 L1265.2 632.4 L1261.2 634.9 L1252.7 636.2 L1245.3 623.1 L1244.2 612.0 L1249.3 599.8 L1247.0 584.9 L1261.2 576.0 L1269.8 564.2ZM1451.2 431.3 L1458.6 438.2 L1462.6 446.8 L1458.6 451.4 L1452.4 452.5 L1450.7 443.9ZM964.3 156.4 L976.8 154.6 L991.0 151.0 L1004.7 146.5 L1006.4 133.6 L998.4 126.0 L995.6 118.3 L987.6 104.5 L985.3 100.4 L979.6 99.4 L985.3 88.0 L986.5 83.8 L976.8 82.7 L979.6 73.0 L968.3 73.0 L963.7 84.9 L964.8 95.3 L964.8 107.5 L969.4 110.5 L978.5 111.5 L977.9 120.3 L979.6 126.0 L970.0 127.0 L973.9 133.6 L967.7 140.1 L979.1 144.7 L972.8 146.5ZM962.6 108.5 L954.0 107.5 L948.3 115.4 L939.8 118.3 L940.9 126.0 L939.8 139.2 L942.7 142.9 L951.2 141.0 L960.9 137.3 L962.6 125.1 L965.4 115.4ZM1044.5 230.5 L1052.5 229.8 L1051.3 244.7 L1044.5 246.1ZM1050.2 215.2 L1050.7 227.5 L1045.6 225.2 L1045.6 218.3ZM1067.2 251.9 L1085.4 250.5 L1082.6 262.0 L1067.8 255.6ZM1130.4 269.7 L1146.3 271.8 L1136.1 273.9ZM1180.5 273.9 L1193.5 269.7 L1189.6 276.7ZM1053.6 109.5 L1058.1 105.5 L1060.4 101.4 L1066.7 99.4 L1068.4 104.5 L1065.0 111.5 L1058.1 111.5ZM1741.4 280.8 L1750.5 270.4 L1767.5 269.0 L1774.9 257.7 L1790.3 251.2 L1793.1 236.5 L1796.0 227.5 L1801.7 229.0 L1804.0 241.7 L1798.3 252.7 L1797.7 263.4 L1793.1 273.9 L1787.5 276.0 L1774.9 278.7 L1767.5 284.2 L1761.9 277.4 L1753.3 278.7 L1744.8 282.2ZM1735.1 284.2 L1741.9 281.5 L1745.9 291.0 L1741.9 301.1 L1737.4 299.7 L1735.1 289.7ZM1750.5 287.6 L1763.0 282.2 L1761.9 279.4 L1750.5 280.8ZM1793.1 226.8 L1800.0 224.5 L1811.9 223.0 L1824.4 212.9 L1815.9 205.8 L1803.4 196.2 L1801.7 211.3 L1794.9 215.2ZM1804.5 191.3 L1813.1 185.5 L1810.2 161.7 L1813.1 129.8 L1809.1 117.4 L1804.5 139.2 L1804.5 170.3ZM1685.1 338.5 L1690.7 339.7 L1687.9 352.2 L1683.9 359.0 L1679.9 352.2 L1680.5 346.0ZM1614.5 375.4 L1622.5 369.9 L1628.2 373.0 L1622.5 380.8 L1615.7 379.6ZM1682.8 379.6 L1691.9 379.6 L1690.7 388.5 L1687.9 397.4 L1702.1 412.1 L1703.3 415.0 L1693.6 407.4 L1683.9 406.8 L1679.4 400.4 L1681.1 391.5ZM1690.7 446.8 L1702.1 435.3 L1710.7 430.7 L1716.3 446.8 L1710.7 454.8 L1702.1 450.8 L1693.6 442.2ZM1696.4 420.8 L1710.7 420.8 L1707.8 429.5 L1693.6 430.7ZM1663.4 438.2 L1676.5 422.0 L1678.2 424.9 L1665.1 439.9ZM1538.9 454.8 L1551.4 457.1 L1568.4 475.3 L1585.5 492.4 L1599.7 504.9 L1599.2 519.8 L1591.2 519.8 L1578.7 509.5 L1567.3 491.3 L1557.1 477.0ZM1595.2 525.5 L1611.1 522.6 L1625.3 525.5 L1637.8 526.0 L1648.1 531.2 L1647.5 535.8 L1628.2 533.5 L1611.1 531.2 L1596.9 526.6ZM1616.8 478.2 L1620.2 475.3 L1628.2 472.5 L1639.5 468.5 L1653.8 455.4 L1661.2 446.8 L1670.8 455.4 L1674.8 458.2 L1668.0 462.8 L1666.9 481.0 L1659.5 492.4 L1659.5 506.6 L1648.1 509.5 L1632.7 505.5 L1623.6 503.2 L1617.9 489.5ZM1676.5 518.0 L1682.2 518.0 L1683.9 500.9 L1690.7 514.0 L1696.4 512.3 L1687.9 496.9 L1698.1 491.8 L1685.1 489.5 L1682.2 483.9 L1705.0 479.9 L1708.9 478.2 L1702.1 483.9 L1679.4 482.7 L1676.5 489.5 L1673.7 506.6ZM1741.9 494.1 L1747.6 489.0 L1759.0 491.8 L1767.5 505.5 L1778.9 495.2 L1798.8 501.5 L1818.7 508.3 L1830.1 518.0 L1837.5 522.6 L1838.7 532.4 L1852.9 546.8 L1838.7 543.9 L1827.3 534.1 L1815.9 530.6 L1807.4 539.3 L1798.8 538.7 L1787.5 532.9 L1780.6 516.9 L1764.7 511.2 L1753.3 509.5 L1747.6 502.6ZM1702.1 545.0 L1707.8 538.1 L1720.9 534.7 L1713.5 539.3ZM1650.9 533.5 L1659.5 534.1 L1673.7 534.1 L1696.4 534.1 L1693.6 537.0 L1670.8 537.5 L1653.8 537.0ZM1645.2 615.0 L1645.2 640.0 L1642.4 643.1 L1650.4 659.2 L1654.9 678.4 L1650.9 694.7 L1668.0 699.5 L1685.1 691.2 L1702.1 685.8 L1713.5 681.0 L1730.6 677.0 L1743.1 675.7 L1760.1 683.7 L1768.1 698.8 L1780.6 683.1 L1781.8 696.0 L1784.6 703.7 L1790.3 710.0 L1797.7 720.7 L1813.1 726.5 L1821.0 719.3 L1829.0 728.7 L1838.7 719.3 L1850.0 717.1 L1850.6 706.5 L1856.9 691.9 L1864.3 679.0 L1870.5 654.0 L1867.7 646.3 L1867.1 633.7 L1855.7 624.3 L1847.2 616.9 L1841.5 605.9 L1828.4 596.2 L1824.4 581.9 L1823.3 573.0 L1813.1 567.1 L1807.4 547.9 L1802.2 558.4 L1801.7 573.0 L1797.7 587.8 L1790.3 587.8 L1778.9 578.9 L1770.4 573.0 L1774.4 556.6 L1764.7 556.6 L1750.5 552.6 L1740.8 557.8 L1733.4 572.4 L1724.9 573.0 L1716.3 567.1 L1705.0 580.7 L1691.9 590.8 L1685.1 599.8 L1670.8 604.7 L1659.5 607.1ZM1819.9 740.6 L1840.4 742.1 L1839.8 752.0 L1833.0 762.9 L1824.4 756.6ZM1979.2 695.3 L1988.3 705.1 L1996.8 717.1 L2012.2 718.6 L2008.8 729.5 L2000.8 739.1 L1991.1 745.1 L1989.4 733.9 L1985.4 729.5 L1990.5 717.1 L1980.9 703.0ZM1979.2 739.1 L1988.3 748.2 L1980.9 762.1 L1969.5 772.4 L1958.1 787.0 L1943.9 782.1 L1946.7 774.0 L1955.3 766.0 L1966.7 756.6 L1975.2 746.6ZM-27.3 1280.8 L655.4 1280.8 L626.9 991.4 L672.4 954.3 L644.0 977.7 L598.5 1052.4 L-27.3 1087.3ZM108.7 376.6 L116.1 373.6 L110.4 368.7 L109.2 372.4ZM105.3 366.9 L109.2 366.3 L107.0 364.5ZM96.1 362.6 L99.6 362.6 L97.9 360.2ZM87.6 358.4 L90.5 357.7 L89.3 356.5ZM656.5 827.8 L667.9 829.6 L663.9 837.0 L652.5 834.2ZM901.1 320.7 L905.1 317.4 L919.9 312.9 L917.6 319.4 L908.0 322.0ZM1929.7 604.1 L1938.2 608.9 L1946.7 616.9 L1941.1 616.3 L1931.4 607.7ZM1901.2 532.4 L1911.5 539.3 L1918.3 546.8 L1909.8 543.9 L1902.4 537.0ZM1943.9 573.0 L1949.6 576.0 L1954.1 587.8 L1949.6 583.7ZM58.0 118.3 L72.3 116.4 L60.9 120.3ZM38.1 127.9 L49.5 123.2 L43.8 125.1ZM15.4 132.7 L26.7 130.8 L21.1 128.9ZM-10.2 141.9 L-1.7 139.2 L-7.4 140.1ZM550.1 330.3 L558.7 328.4 L555.8 334.7ZM553.0 341.0 L555.8 338.5 L554.1 344.1ZM26.7 19.1 L37.0 21.6 L32.4 15.3ZM49.5 55.2 L56.3 51.7 L50.6 50.5ZM1830.1 209.8 L1841.5 199.4 L1850.0 191.3 L1835.8 203.4ZM1861.4 183.0 L1872.8 170.3 L1881.3 155.5 L1869.9 174.6ZM644.6 429.5 L650.2 424.9 L645.7 424.9ZM1311.3 608.3 L1314.1 610.8 L1312.4 610.2ZM1323.2 602.9 L1325.5 605.9 L1323.2 605.3ZM861.3 400.4 L863.6 398.6 L862.4 401.0ZM853.3 254.8 L849.9 254.1 L851.6 253.4ZM1723.7 503.8 L1736.3 503.2 L1740.8 507.2 L1727.7 507.8ZM1720.9 475.9 L1724.9 473.6 L1728.9 482.1 L1723.7 485.6 L1722.0 481.0ZM1761.9 518.0 L1763.6 525.5 L1760.1 523.8ZM1850.0 514.0 L1861.4 510.6 L1864.3 518.0 L1855.7 522.0 L1848.9 519.8ZM1852.9 501.5 L1864.3 506.6 L1860.3 509.5Z" fill="#f2efe9"/>
<path d="M1276.6 187.2 L1286.8 183.0 L1298.2 184.7 L1299.3 197.0 L1288.5 203.4 L1282.9 202.6 L1289.7 213.7 L1296.5 223.0 L1298.2 230.5 L1302.8 238.0 L1298.2 245.4 L1303.3 257.7 L1289.7 262.0 L1281.1 257.0 L1275.5 251.9 L1274.9 246.9 L1280.6 235.1 L1273.2 224.5 L1266.9 215.2 L1265.2 205.8 L1266.9 195.4 L1272.6 188.8ZM1162.2 229.0 L1173.1 229.8 L1184.4 223.7 L1195.8 223.0 L1207.2 229.0 L1218.6 230.5 L1233.4 226.0 L1232.8 219.1 L1222.5 210.5 L1212.9 203.4 L1204.9 197.8 L1196.9 199.4 L1190.1 203.4 L1187.3 202.6 L1181.6 196.2 L1187.3 191.3 L1177.6 186.4 L1171.3 187.2 L1165.7 197.0 L1160.0 205.0 L1155.4 213.7 L1156.0 223.0ZM1195.8 195.4 L1204.9 196.2 L1214.0 191.3 L1219.7 181.4 L1210.0 183.0 L1198.7 187.2ZM472.8 185.5 L487.5 174.6 L496.1 167.8 L513.1 175.5 L515.4 187.2 L504.6 187.2 L493.2 183.0 L481.9 186.4ZM497.2 223.0 L498.9 199.4 L510.3 192.9 L505.7 211.3 L504.6 222.2ZM516.0 192.9 L533.1 192.1 L541.6 201.8 L527.4 215.2 L521.7 207.4ZM521.7 225.2 L547.3 216.8 L535.9 218.3ZM542.7 212.9 L563.2 211.3 L555.8 207.4Z" fill="#aad3df"/>
<path d="M1177.6 487.8 L1184.4 484.4 L1190.1 485.6 L1194.7 489.5 L1190.1 495.2 L1187.3 500.9 L1181.6 502.6 L1177.0 495.2ZM1161.7 505.5 L1164.0 506.1 L1167.4 518.0 L1171.9 526.6 L1174.2 535.8 L1170.8 536.4 L1165.1 523.8 L1162.2 512.3ZM1190.1 540.4 L1192.4 541.6 L1195.2 552.6 L1197.5 569.5 L1194.7 568.9 L1191.3 555.5 L1190.1 546.8ZM1586.6 141.9 L1591.2 143.8 L1602.6 134.5 L1613.9 125.1 L1620.8 103.5 L1618.5 101.4 L1611.1 120.3 L1599.7 129.8 L1591.2 137.3ZM1414.8 189.7 L1423.4 186.4 L1434.7 186.4 L1447.3 188.8 L1446.1 192.9 L1431.9 189.7 L1420.5 192.9ZM331.1 45.9 L342.5 36.4 L359.5 27.9 L376.6 24.1 L368.1 34.0 L351.0 43.5 L336.8 48.2ZM362.4 73.0 L376.6 66.4 L390.8 65.3 L388.0 68.6 L370.9 71.9ZM444.9 152.8 L436.3 134.5 L430.7 122.2 L440.3 118.3 L448.9 134.5 L447.7 148.3ZM1167.4 48.2 L1173.1 40.0 L1181.6 43.5 L1181.6 52.9 L1173.1 55.2ZM1194.1 40.0 L1198.7 24.1 L1203.2 31.5 L1198.7 43.5Z" fill="#aad3df"/>
<path d="M295.3 166.0 L455.1 166.0 L455.1 162.5 L487.0 174.6 L516.0 187.2 L527.9 197.0 L527.4 219.1 L546.7 213.7 L561.5 207.4 L571.2 199.4 L589.9 199.4 L598.5 185.5 L603.0 179.7 L611.0 182.2 L611.0 193.8 L615.5 199.4M194.6 -79.0 L194.6 54.0 L205.9 57.4 L214.5 68.6 L225.9 59.7 L237.2 74.1 L251.5 100.4 L257.1 101.4 L257.1 113.4M330.5 291.0 L344.2 289.7 L364.7 299.1 L381.2 299.1 L390.8 295.7 L402.2 310.3 L410.2 314.2 L419.8 309.0 L430.7 323.9 L443.7 334.1M472.2 403.3 L472.2 399.2 L479.0 383.8 L489.3 383.8 L494.4 379.6M489.3 383.8 L489.3 395.1M488.1 403.9 L497.2 411.5M510.3 401.0 L523.4 400.4M509.2 423.2 L520.5 423.7M524.5 439.3 L526.8 431.8M556.4 441.6 L554.1 437.0M703.2 462.8 L689.5 473.6 L675.3 475.9 L657.6 476.5 L655.4 461.1 L651.4 457.1 L632.6 463.9 L615.5 475.3 L601.9 479.9 L599.0 510.6 L581.4 529.5 L595.6 541.0 L601.3 549.7 L625.2 542.7 L641.1 564.2 L654.2 565.4 L665.6 580.7 L669.6 592.0 L683.8 627.4 L686.1 637.4 L691.2 647.0 L678.1 667.1 L669.0 667.1 L692.9 690.5M689.5 453.6 L689.5 473.6M672.4 452.5 L669.6 475.3M652.5 438.2 L649.7 455.4M587.1 417.9 L584.3 435.3 L592.8 446.8 L612.7 452.5 L612.7 472.5M547.3 478.2 L558.7 483.9 L567.2 489.5 L567.2 498.1 L553.0 506.6 L539.9 506.6M599.0 510.6 L595.6 495.2 L578.6 492.4M596.8 592.6 L604.2 587.8 L604.2 573.0 L601.9 549.7M607.0 618.1 L614.4 619.4 L626.9 615.0 L641.1 615.0 L649.7 599.8 L665.6 599.8 L669.6 592.0M607.0 618.1 L608.7 630.5 L607.0 646.3 L599.0 665.7 L597.3 685.8 L595.6 706.5 L591.7 728.0 L588.2 750.4 L588.8 774.0 L585.4 798.8 L579.7 816.1 L587.1 834.2 L606.4 837.0M641.1 615.0 L649.7 626.2 L666.7 636.8 L686.1 637.4M665.6 685.8 L669.0 667.1M986.5 273.2 L989.9 291.0 L976.8 297.7 L947.2 316.1 L947.2 325.2 L947.2 333.4 L928.4 333.4 L928.4 349.1 L922.7 362.6 L900.0 362.6M947.2 322.6 L921.6 322.6M969.4 339.7 L959.7 340.4 L965.4 397.4 L931.3 397.4 L927.3 402.1 L902.8 392.7M947.2 325.2 L969.4 339.7 L1003.5 364.5 L1020.6 375.4 L1030.8 373.6 L1065.0 349.1 L1053.6 341.0 L1055.3 330.3 L1050.7 307.7 L1054.7 297.7 L1062.1 287.0M1043.3 260.6 L1043.9 284.2 L1050.7 307.7M1138.9 297.1 L1138.9 358.4 L1206.6 358.4M1065.0 349.1 L1082.0 352.2 L1133.2 373.6 L1133.2 370.5 L1138.9 370.5 L1138.9 358.4M1133.2 373.6 L1124.7 397.4 L1121.9 412.1 L1130.4 435.3 L1150.3 458.2 L1173.1 466.8 L1190.1 461.1 L1198.7 458.2 L1201.5 441.0 L1207.2 403.3 L1204.3 388.5 L1215.7 382.6M1082.0 352.2 L1084.9 370.5 L1073.5 406.3 L1079.2 417.9 L1084.9 429.5 L1076.3 441.0 L1090.6 443.9 L1104.8 435.3 L1121.9 426.6 L1130.4 435.3M1017.2 419.7 L1047.9 413.3 L1074.1 408.0M1074.1 408.0 L1079.2 417.9 L1067.8 438.2 L1045.6 459.9M1020.6 375.4 L1020.6 392.1 L1002.4 400.4 L1017.2 419.7 L1012.1 450.2M965.4 397.4 L973.9 412.1 L996.7 423.7 L1002.4 400.4M996.7 423.7 L979.6 423.7 L951.2 426.6 L934.1 415.0 L925.6 415.0 L901.7 415.6M951.2 426.6 L954.0 461.6M979.6 423.7 L980.8 458.2M996.7 423.7 L999.5 451.9M1005.2 420.8 L1006.4 451.4M931.3 446.8 L939.8 438.2 L942.7 452.5 L954.0 461.6M919.9 432.4 L928.4 435.3 L934.1 429.5 L939.8 438.2M1050.7 474.2 L1061.0 474.2 L1087.7 475.3 L1101.9 466.8 L1121.9 461.1 L1150.3 458.2M1061.0 474.2 L1062.1 492.4 L1073.5 500.9 L1065.0 515.2M1087.7 475.3 L1096.3 489.5 L1088.9 509.5 L1066.7 520.9M1070.7 518.0 L1087.7 520.9 L1099.1 532.4 L1121.9 526.6 L1133.2 549.7 L1156.0 555.5 L1164.5 561.3 L1153.1 549.7 L1161.7 532.4 L1167.4 509.5 L1170.2 492.4 L1164.5 481.0 L1173.1 466.8M1063.8 586.1 L1076.3 586.6 L1110.5 589.6 L1133.2 587.8 L1138.9 590.2M1110.5 589.6 L1110.5 615.0 L1110.5 632.4 L1110.5 656.0 L1093.4 657.9M1133.2 549.7 L1121.9 561.3 L1121.9 578.9 L1133.2 587.8M1138.9 590.2 L1156.0 578.9 L1167.4 576.0 L1184.4 567.1 L1184.4 541.0 L1167.4 534.1 L1164.5 561.3M1138.9 590.2 L1150.3 608.9 L1164.5 616.3 L1175.9 616.3 L1181.6 599.8 L1184.4 581.9 L1167.4 576.0M1110.5 632.4 L1124.7 640.0 L1138.9 638.1 L1150.3 624.3 L1164.5 616.3M1175.9 616.3 L1178.7 636.8 L1183.9 645.0M1167.4 509.5 L1190.1 492.4 L1210.0 506.6 L1220.3 512.9M1184.4 541.0 L1195.8 546.8 L1221.4 546.8M1190.1 461.1 L1198.7 458.2 L1224.3 463.9 L1234.5 463.9 L1229.9 495.2M1201.5 441.0 L1224.3 441.0 L1247.0 458.2 L1269.8 441.0 L1266.9 423.2M1238.5 415.0 L1242.5 420.8 L1235.6 423.7M946.1 223.7 L960.9 225.2 L957.4 236.5 L955.2 249.1 L954.6 258.4M986.5 212.1 L1014.9 219.9M1010.9 147.4 L1020.6 157.3 L1031.4 161.7 L1043.3 166.0 L1039.9 178.0 L1030.8 188.8 L1036.5 192.1 L1035.4 203.4 L1039.4 209.0M1036.5 127.0 L1035.4 139.2 L1031.4 150.1 L1031.4 161.7M1021.2 144.7 L1028.0 145.6 L1031.4 150.1M1045.6 111.5 L1053.0 112.5M1077.5 121.2 L1079.8 134.5 L1082.0 148.3 L1065.5 154.6 L1075.2 167.8 L1070.7 178.8 L1056.4 180.5 L1039.9 178.0M1082.0 148.3 L1103.7 161.7 L1125.3 165.2 L1133.2 152.8 L1130.4 139.2 L1130.4 121.2 L1126.4 116.4 L1107.6 116.4M1036.5 192.1 L1056.4 187.2 L1067.2 183.0 L1074.6 187.2 L1074.1 194.6M1074.6 187.2 L1090.6 187.2 L1093.4 174.6 L1092.8 169.5 L1082.0 166.0 L1075.2 167.8M1092.8 169.5 L1103.7 161.7M1093.4 174.6 L1110.5 172.9 L1124.7 171.2M1090.6 187.2 L1104.8 192.1 L1112.2 190.5 L1119.0 185.5 L1124.7 171.2 L1133.2 175.5 L1147.5 172.9 L1157.1 195.4 L1165.7 197.0M1124.7 203.4 L1138.9 209.8 L1153.1 207.4 L1159.4 209.8M1124.7 203.4 L1124.1 219.1 L1127.5 228.3 L1146.3 225.2 L1156.0 223.0M1110.5 223.0 L1116.2 232.1 L1127.5 228.3M1107.1 223.0 L1113.9 229.8 L1111.0 240.3M1084.9 195.4 L1096.3 192.1 L1104.8 199.4 L1107.6 211.3 L1101.9 219.9M1104.8 199.4 L1116.2 203.4 L1124.7 203.4M1130.4 121.2 L1144.6 105.5 L1156.0 100.4 L1156.0 84.9 L1153.1 64.2M1116.7 103.5 L1133.2 97.4 L1156.0 100.4M1119.6 84.9 L1136.1 81.7 L1150.3 84.9M1130.4 139.2 L1144.6 140.1 L1170.2 145.6 L1177.6 138.3 L1198.7 137.3 L1214.0 156.4 L1224.8 160.8 L1214.0 181.4 L1214.0 191.3M1177.6 138.3 L1178.7 125.1 L1171.9 105.5 L1157.1 98.4M1156.0 -62.7 L1167.4 -39.7 L1164.5 -18.0 L1167.4 8.9 L1175.9 24.1 L1154.9 51.7M1065.0 68.6 L1067.8 45.9 L1066.1 15.3 L1076.3 -4.3 L1082.0 -18.0M1133.2 -15.3 L1130.4 -32.3 L1116.2 -62.7M1144.6 226.8 L1147.5 232.1M1202.6 266.9 L1212.9 261.3 L1235.6 258.4 L1251.6 257.7 L1258.4 273.9 L1259.5 287.6 L1266.9 294.4 L1272.6 307.7M1251.6 257.7 L1247.0 241.7 L1238.5 227.5M1238.5 227.5 L1252.7 229.0 L1264.1 225.2 L1273.2 224.5M1224.3 211.3 L1241.3 215.2 L1258.4 223.0 L1269.8 224.5M1247.0 241.7 L1252.7 243.2 L1269.8 249.1M1204.3 310.9 L1212.9 304.4 L1219.7 293.0 L1235.6 300.4 L1251.0 312.9 L1261.2 313.5 L1269.8 314.2M1201.5 292.4 L1219.7 293.0 L1229.9 277.4 L1236.8 258.4M1199.8 287.6 L1204.3 277.4 L1200.9 267.6M1240.2 391.5 L1261.2 386.8 L1292.5 376.6 L1309.6 354.0 L1312.4 358.4 L1292.5 347.2 L1290.2 344.1M1292.5 391.5 L1298.8 390.9 L1318.1 382.6M1315.3 342.9 L1314.1 344.7M1266.9 187.2 L1275.5 170.3 L1261.2 170.3 L1281.1 143.8 L1309.6 151.9 L1343.7 148.3 L1346.6 120.3 L1369.3 115.4 L1394.9 110.5 L1414.8 120.3 L1431.9 122.2 L1451.8 150.1 L1468.9 148.3 L1491.6 164.3M1496.2 164.3 L1520.1 152.8 L1554.2 139.2 L1577.0 143.8 L1605.4 157.3 L1622.5 161.7 L1660.6 159.0M1660.6 159.0 L1679.4 134.5 L1696.4 125.1 L1719.2 134.5 L1739.1 166.9 L1763.0 172.1 L1753.3 199.4 L1743.1 216.0 L1740.2 220.7M1496.2 164.3 L1511.5 197.0 L1545.7 217.6 L1571.3 219.1 L1594.0 226.0 L1632.7 209.8 L1648.1 200.2 L1668.0 185.5 L1678.8 185.5 L1665.1 177.2 L1660.6 159.0M1491.6 164.3 L1480.3 183.0 L1466.0 197.0 L1452.9 221.4 L1429.1 235.1 L1422.8 257.7 L1440.4 270.4 L1449.0 291.0 L1457.5 306.3 L1480.3 318.7 L1497.9 321.3 L1517.2 322.0 L1540.0 314.2 L1550.2 319.4M1420.5 259.8 L1417.7 277.4 L1421.1 291.0 L1420.5 301.1 L1400.6 320.7 L1394.9 336.6 L1384.7 347.9M1420.5 259.8 L1403.5 263.4 L1394.9 280.8 L1389.2 297.7 L1375.0 310.9 L1343.7 309.0 L1346.6 297.7 L1342.6 277.4 L1344.9 262.7 L1323.8 252.7 L1303.9 257.0M1343.7 309.0 L1349.4 320.7 L1347.1 338.5M1344.9 262.7 L1366.5 257.7 L1380.7 257.7 L1400.6 254.1 L1422.8 257.7M1303.9 257.0 L1299.3 241.7 L1315.3 228.3 L1326.7 219.1 L1343.7 205.0 L1349.4 211.3 L1366.5 211.3 L1372.2 223.0 L1394.9 223.0 L1400.6 216.8 L1417.7 213.7 L1452.9 221.4M1497.9 321.3 L1498.5 330.9 L1507.6 333.4 L1522.9 338.5 L1522.9 358.4 L1528.6 346.0 L1534.3 330.3 L1550.2 319.4M1498.5 330.9 L1500.2 359.6M1522.9 358.4 L1521.8 366.3M1457.5 306.3 L1451.8 317.4 L1468.9 325.2 L1497.9 330.3M1550.2 319.4 L1557.1 336.6 L1558.2 346.0 L1565.6 359.6 L1571.3 362.0 L1577.0 355.3 L1599.7 353.4 L1611.1 361.4M1566.2 368.1 L1554.2 385.6 L1559.9 423.7 L1558.2 429.5M1571.3 362.0 L1566.2 368.1 L1591.2 385.6 L1596.9 404.5 L1579.8 417.9M1591.2 353.4 L1588.3 367.5 L1608.3 400.4 L1608.3 415.0 L1591.2 426.6M1566.7 449.6 L1577.5 451.4M1619.6 478.2 L1645.2 478.2 L1662.3 462.8M1798.8 501.5 L1798.8 538.7M1705.0 239.5 L1719.2 226.8 L1730.6 220.7 L1740.2 220.7M1707.8 254.1 L1726.6 249.1" fill="none" stroke="#cdbccb" stroke-width="1.5" stroke-linejoin="round" stroke-opacity="0.9"/>
<circle cx="301.5" cy="175.4" r="10.5" fill="#5b80c2" fill-opacity="0.85"/><circle cx="331.5" cy="184.0" r="12" fill="#5b80c2" fill-opacity="0.85"/><circle cx="301.5" cy="255.4" r="4" fill="#3b4fa8" fill-opacity="0.9"/><circle cx="578.0" cy="232.0" r="21.8" fill="#7fb3e0" fill-opacity="0.85"/><circle cx="557.8" cy="243.7" r="5" fill="#3f55b0" fill-opacity="0.85"/><circle cx="461.5" cy="289.3" r="16" fill="#7aa1cc" fill-opacity="0.9"/><circle cx="531.7" cy="319.8" r="48.8" fill="#f1f7c9" fill-opacity="1"/><circle cx="730.0" cy="617.4" r="4.5" fill="#3f55b0" fill-opacity="0.9"/><circle cx="1101.5" cy="692.0" r="9" fill="#4a66b8" fill-opacity="0.9"/><circle cx="1097.9" cy="61.6" r="71.1" fill="#fbad6e" fill-opacity="0.9"/><circle cx="990.0" cy="130.0" r="11.3" fill="#5b80c2" fill-opacity="0.85"/><circle cx="1025.8" cy="133.6" r="12.4" fill="#5b80c2" fill-opacity="0.85"/><circle cx="997.6" cy="143.7" r="4" fill="#3f55b0" fill-opacity="0.9"/><circle cx="1009.9" cy="167.6" r="36" fill="#d3ebf3" fill-opacity="0.85"/><circle cx="1011.8" cy="165.6" r="7.8" fill="#4a66b8" fill-opacity="0.9"/><circle cx="1047.8" cy="203.7" r="8" fill="#4a66b8" fill-opacity="0.9"/><circle cx="1073.8" cy="133.6" r="6" fill="#4a66b8" fill-opacity="0.9"/><circle cx="1093.8" cy="155.7" r="19" fill="#7fb0dc" fill-opacity="0.85"/><circle cx="1111.9" cy="155.7" r="6" fill="#4a66b8" fill-opacity="0.85"/><circle cx="1103.7" cy="116.1" r="6" fill="#4a5cb0" fill-opacity="0.85"/><circle cx="1122.0" cy="113.9" r="12" fill="#6a90c0" fill-opacity="0.85"/><circle cx="1133.5" cy="109.8" r="7" fill="#4a66b8" fill-opacity="0.8"/><circle cx="1157.6" cy="130.0" r="18" fill="#7aa6cc" fill-opacity="0.9"/><circle cx="1211.8" cy="101.7" r="10" fill="#5b80c2" fill-opacity="0.85"/><circle cx="1253.9" cy="224.0" r="61.2" fill="#f9dc9d" fill-opacity="1"/><circle cx="1289.9" cy="267.8" r="7" fill="#5b80c2" fill-opacity="0.85"/><circle cx="957.8" cy="238.0" r="20" fill="#c9e1ea" fill-opacity="0.6"/><circle cx="977.8" cy="257.7" r="13" fill="#5b80c2" fill-opacity="0.85"/><circle cx="1073.6" cy="251.5" r="6.5" fill="#4a66b8" fill-opacity="0.85"/><circle cx="1083.9" cy="253.5" r="6.5" fill="#4a66b8" fill-opacity="0.85"/><circle cx="1163.8" cy="235.6" r="9" fill="#4a66b8" fill-opacity="0.85"/><circle cx="1195.8" cy="289.6" r="15" fill="#5b80c2" fill-opacity="0.85"/><circle cx="1440.0" cy="412.0" r="80" fill="#ec8262" fill-opacity="1"/><circle cx="1412.0" cy="376.0" r="100" fill="#ae3a4b" fill-opacity="0.98"/><clipPath id="redclip"><circle cx="1412.0" cy="376.0" r="100"/></clipPath><circle cx="1440.0" cy="412.0" r="80" fill="#b01c33" clip-path="url(#redclip)"/><circle cx="1433.6" cy="301.4" r="7.5" fill="#b01c33" fill-opacity="1"/><circle cx="1430.0" cy="322.5" r="15" fill="#b01c33" fill-opacity="1"/><circle cx="1426.0" cy="322.0" r="8" fill="#4a66b8" fill-opacity="0.9"/><circle cx="1500.0" cy="353.0" r="9" fill="#b01c33" fill-opacity="1"/><circle cx="1421.9" cy="216.0" r="5.3" fill="#4a66b8" fill-opacity="0.9"/><circle cx="1263.9" cy="341.7" r="9" fill="#5070c0" fill-opacity="0.9"/><circle cx="1719.7" cy="256.0" r="38" fill="#d4ecf4" fill-opacity="0.85"/><circle cx="1719.9" cy="253.4" r="7" fill="#bcd6da" fill-opacity="0.9"/><circle cx="1790.6" cy="267.5" r="12" fill="#5b80c2" fill-opacity="0.85"/><circle cx="1647.8" cy="355.2" r="15" fill="#5b80c2" fill-opacity="0.85"/><circle cx="1647.8" cy="355.2" r="7" fill="#4050b0" fill-opacity="0.85"/><circle cx="1684.0" cy="343.5" r="7" fill="#4a66b8" fill-opacity="0.9"/><circle cx="1685.2" cy="396.2" r="5" fill="#4a66b8" fill-opacity="0.9"/><circle cx="1868.0" cy="648.0" r="38" fill="#d8edf3" fill-opacity="0.7"/><circle cx="1858.0" cy="690.6" r="40" fill="#d8edf3" fill-opacity="0.75"/><circle cx="1822.2" cy="716.9" r="25" fill="#88b4da" fill-opacity="0.85"/><circle cx="1857.8" cy="690.9" r="19" fill="#5b80c2" fill-opacity="0.85"/><circle cx="1857.8" cy="690.9" r="8" fill="#4050b0" fill-opacity="0.6"/><circle cx="1025.8" cy="179.9" r="2" fill="#3040a0" fill-opacity="0.9"/><circle cx="1049.7" cy="193.8" r="2" fill="#3040a0" fill-opacity="0.9"/><circle cx="1019.6" cy="210.0" r="2" fill="#3040a0" fill-opacity="0.9"/><circle cx="977.9" cy="233.6" r="2" fill="#3040a0" fill-opacity="0.9"/><circle cx="1283.8" cy="329.5" r="2" fill="#3040a0" fill-opacity="0.9"/><circle cx="1543.6" cy="363.4" r="2" fill="#3040a0" fill-opacity="0.9"/><circle cx="1643.6" cy="273.8" r="2" fill="#3040a0" fill-opacity="0.9"/><circle cx="1687.6" cy="297.9" r="2" fill="#3040a0" fill-opacity="0.9"/><circle cx="1588.0" cy="477.7" r="2" fill="#3040a0" fill-opacity="0.9"/><circle cx="578.0" cy="232.0" r="2" fill="#3040a0" fill-opacity="0.9"/><circle cx="551.8" cy="252.0" r="2" fill="#3040a0" fill-opacity="0.9"/></svg><div style="position:absolute;left:924px;top:665px;width:68px;height:128px;box-sizing:border-box;border:4px solid rgba(0,0,0,0.2);border-radius:8px;background:#fff;background-clip:padding-box"></div><div style="position:absolute;left:928px;top:727px;width:60px;height:2px;background:#ccc"></div><svg style="position:absolute;left:946px;top:691px;overflow:visible" width="26" height="26" viewBox="0 0 26 26"><path d="M13 0 V26 M0 13 H26" stroke="#000" stroke-width="4.5"/></svg><svg style="position:absolute;left:946px;top:759px;overflow:visible" width="26" height="8" viewBox="0 0 26 8"><path d="M0 3.5 H26" stroke="#000" stroke-width="5"/></svg><div style="position:absolute;left:926px;top:1569px;width:28px;height:28px;background:#b03a4a;border-radius:50%"></div><div style="position:absolute;left:977px;top:1571.8px;font-size:23px;line-height:23px;color:#3c3438;font-weight:normal;white-space:nowrap;">Layer 1</div><div style="position:absolute;left:2363px;width:1000px;text-align:center;top:1239.9px;font-size:23px;line-height:23px;color:#333;font-weight:normal;white-space:nowrap;">High</div><div style="position:absolute;left:2844px;top:1280px;width:40px;height:284px;background:linear-gradient(to bottom,#b01c33 0%,#b01c33 5%,#e0302e 11%,#f05a3e 19%,#ea7f5e 24%,#f4a673 31%,#f8c888 39%,#fde9a0 46%,#f2f5cc 54%,#e2f0f0 61%,#c7e2ec 68%,#9fcbe6 73%,#86b4dc 77%,#6a90c4 84%,#4a64b4 92%,#33409a 100%)"></div><div style="position:absolute;left:2839px;top:1275px;width:50px;height:16px;background:#b01c33;border:2px solid #fff;border-radius:8px;box-sizing:border-box"></div><div style="position:absolute;left:2839px;top:1555px;width:50px;height:16px;background:#33409a;border:2px solid #fff;border-radius:8px;box-sizing:border-box"></div><div style="position:absolute;right:209px;text-align:right;top:1271.2px;font-size:23px;line-height:23px;color:#333;font-weight:normal;white-space:nowrap;">2067</div><div style="position:absolute;right:207px;text-align:right;top:1551.2px;font-size:23px;line-height:23px;color:#333;font-weight:normal;white-space:nowrap;">1</div><div style="position:absolute;left:2363px;width:1000px;text-align:center;top:1584.5px;font-size:23px;line-height:23px;color:#333;font-weight:normal;white-space:nowrap;">Low</div><div style="position:absolute;left:2426px;top:1584px;width:474px;height:34px;background:#f1f2f7"></div><svg style="position:absolute;left:2436px;top:1593px;overflow:visible" width="24" height="16" viewBox="0 0 24 16"><rect width="24" height="8" fill="#4a86d8"/><rect y="8" width="24" height="8" fill="#fcc419"/></svg><div style="position:absolute;left:2467px;top:1588.7px;font-size:24px;line-height:24px;color:#333;font-weight:normal;white-space:nowrap;"><span style="color:#0a74c4">Leaflet</span> <span style="color:#333">|</span> <span style="color:#333">©</span> <span style="color:#0a74c4">OpenStreetMap</span> <span style="color:#333">contributors</span></div><div style="position:absolute;left:895px;top:1630px;width:2015px;height:80px;background:#cccccc"></div><div style="position:absolute;left:895px;top:1710px;width:2015px;height:8px;background:#fafafa"></div><svg style="position:absolute;left:931px;top:1665px;overflow:visible" width="8" height="13" viewBox="0 0 8 13"><path d="M0 0 L8 6.5 L0 13 Z" fill="#111"/></svg><div style="position:absolute;left:999px;top:1655.3px;font-size:28px;line-height:28px;color:#111;font-weight:normal;white-space:nowrap;">Query 1</div><div style="position:absolute;left:998px;top:1701px;width:101px;height:5px;background:#111"></div><svg style="position:absolute;left:1153px;top:1658px;overflow:visible" width="23" height="23" viewBox="0 0 23 23"><path d="M11.5 0 V23 M0 11.5 H23" stroke="#111" stroke-width="3"/></svg><div style="position:absolute;left:2581px;top:1641px;width:305px;height:57px;box-sizing:border-box;border:2px solid #999;border-radius:14px;background:#eee;overflow:hidden"></div><div style="position:absolute;left:2583px;top:1643px;width:103px;height:53px;background:#5b5fb0;border-radius:12px 0 0 12px"></div><div style="position:absolute;left:2134px;width:1000px;text-align:center;top:1655.6px;font-size:27px;line-height:27px;color:#fff;font-weight:bold;white-space:nowrap;">Auto</div><div style="position:absolute;left:2285px;width:1000px;text-align:center;top:1654.8px;font-size:28px;line-height:28px;color:#111;font-weight:normal;white-space:nowrap;">Custom SQL</div><div style="position:absolute;left:2510px;top:1660px;width:46px;height:20px;background:#888;border-radius:10px"></div><div style="position:absolute;left:2507px;top:1655px;width:29px;height:29px;border-radius:50%;background:#fff;box-shadow:0 1px 3px rgba(0,0,0,0.4);font-family:'Liberation Serif';font-style:italic;font-size:15px;line-height:29px;text-align:center;color:#888">fx</div><div style="position:absolute;left:2868px;top:1710px;width:20px;height:8px;background:#ccc"></div><div style="position:absolute;left:2888px;top:1710px;width:20px;height:8px;background:#5b5fb0"></div>
</body></html>
